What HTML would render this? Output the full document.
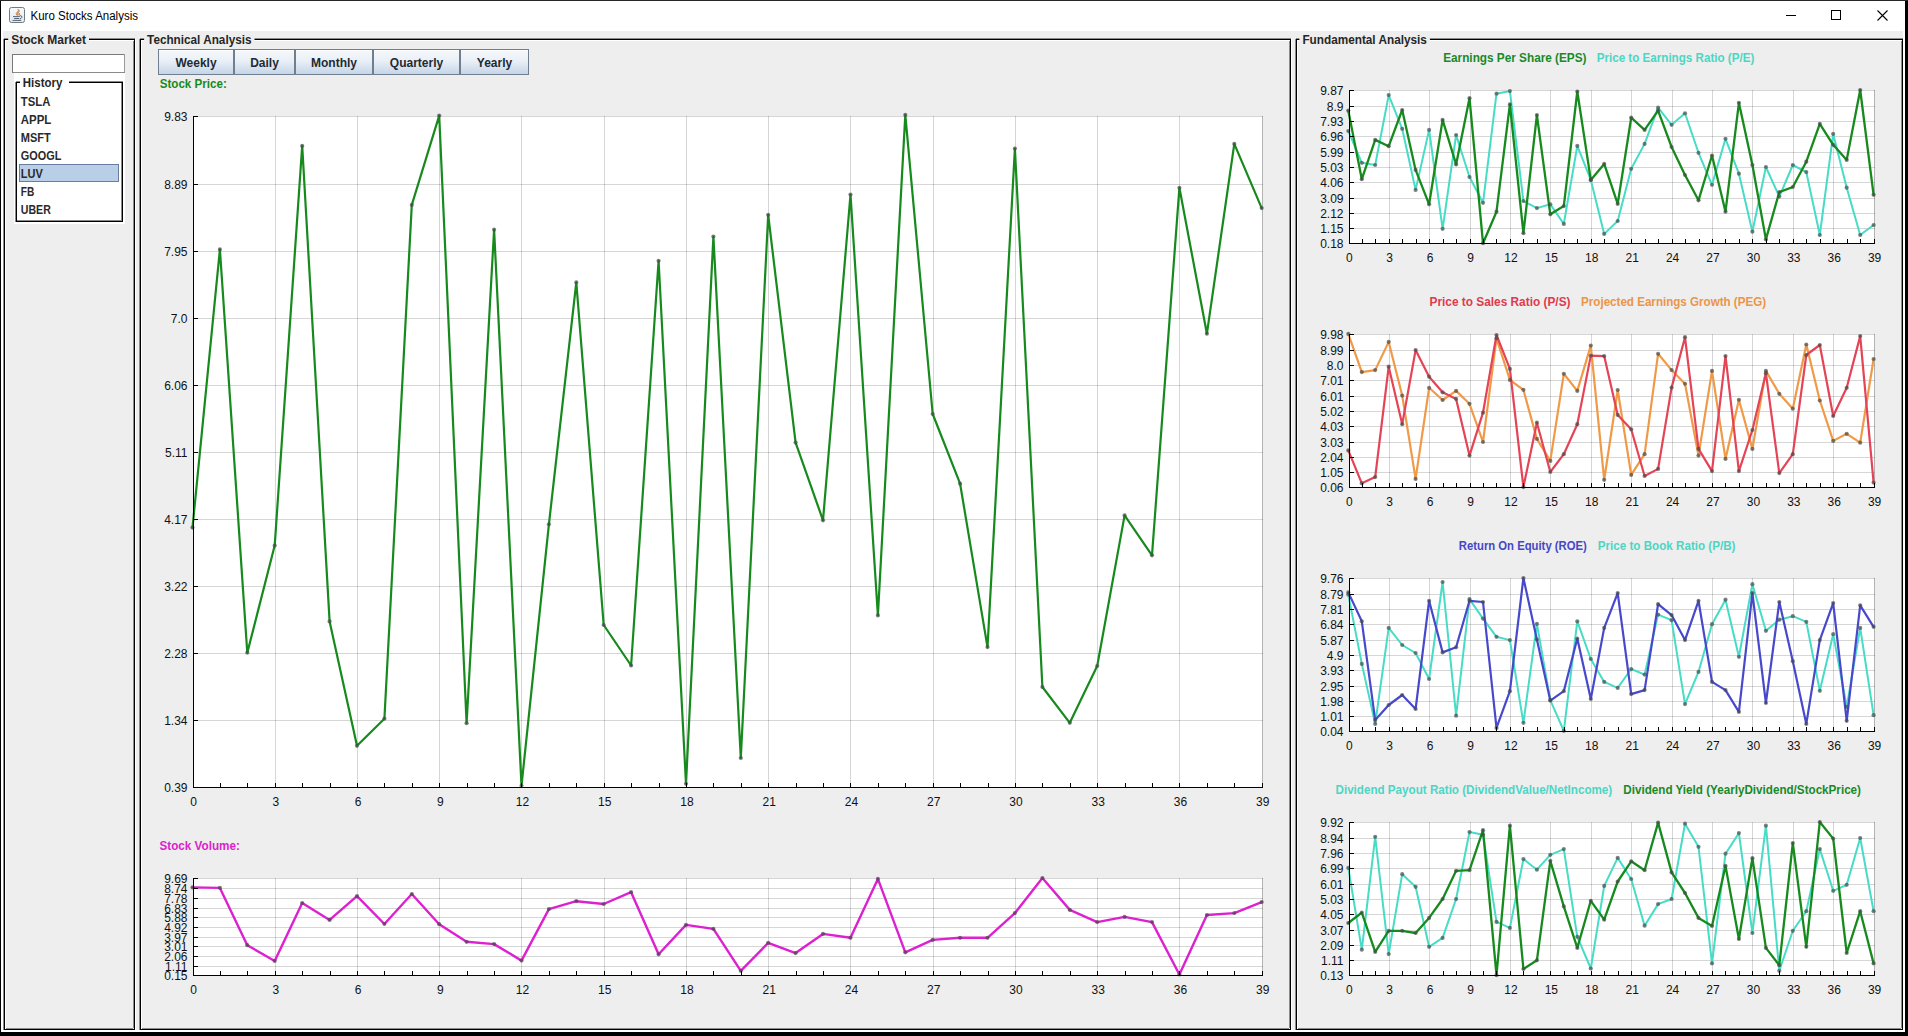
<!DOCTYPE html>
<html><head><meta charset="utf-8"><title>Kuro Stocks Analysis</title>
<style>html,body{margin:0;padding:0;overflow:hidden;background:#000;width:1908px;height:1036px}
svg{display:block;font-family:"Liberation Sans",sans-serif}</style></head>
<body><svg width="1908" height="1036" viewBox="0 0 1908 1036">
<rect x="0" y="0" width="1908" height="1036" fill="#000" />
<rect x="0" y="0" width="1908" height="1" fill="#262626" />
<rect x="1" y="1" width="1904" height="1031" fill="#ffffff" />
<rect x="3" y="31" width="1900" height="999" fill="#eeeeee" />
<g>
<defs><linearGradient id="ic" x1="0" y1="0" x2="0" y2="1"><stop offset="0" stop-color="#f8fafc"/><stop offset="1" stop-color="#dfe8f2"/></linearGradient></defs>
<rect x="9.5" y="7.5" width="15" height="15" fill="url(#ic)" rx="2" stroke="#727a82" stroke-width="1"/>
<path d="M17.2 15.6 q-2.2 -2 0.2 -3.8 q1.6 -1.2 0.6 -2.6 q2.4 1.4 0.6 3.2 q-1.2 1.2 -1.4 3.2 z M19 15.4 q-1 -1.2 0.4 -2.4 q0.8 1 -0.4 2.4 z" fill="#e8a870" stroke="#c07840" stroke-width="0.7"/>
<path d="M13 16.6 h6.8 M14.2 18.5 h4.8 M12.6 20.4 h8.6" stroke="#465262" stroke-width="0.9" fill="none"/>
<path d="M19.8 15.6 q2.6 0 2 2 q-0.4 1 -2.2 1.3" stroke="#4a5666" stroke-width="0.9" fill="none"/>
</g>
<text x="30.5" y="20" font-size="12.5" font-weight="normal" fill="#000" text-anchor="start" textLength="107.5" lengthAdjust="spacingAndGlyphs" >Kuro Stocks Analysis</text>
<rect x="1786" y="15" width="10" height="1" fill="#000" />
<rect x="1831.5" y="10.5" width="9" height="9" fill="none" stroke="#000" stroke-width="1"/>
<path d="M1877.5 10.5 L1887.5 20.5 M1887.5 10.5 L1877.5 20.5" stroke="#000" stroke-width="1.1"/>
<rect x="5" y="40" width="1" height="989" fill="#fff" />
<rect x="135" y="39" width="1" height="992" fill="#fff" />
<rect x="4" y="1030" width="132" height="1" fill="#fff" />
<rect x="5" y="40" width="3.1999999999999993" height="1" fill="#fff" />
<rect x="89.0" y="40" width="45.0" height="1" fill="#fff" />
<rect x="3" y="39" width="1" height="991" fill="#8c8c8c" />
<rect x="133" y="41" width="1" height="987" fill="#8c8c8c" />
<rect x="6" y="1028" width="127" height="1" fill="#8c8c8c" />
<rect x="4" y="38" width="4.199999999999999" height="1" fill="#8c8c8c" />
<rect x="89.0" y="38" width="46.0" height="1" fill="#8c8c8c" />
<rect x="4" y="39" width="1" height="991" fill="#000" />
<rect x="134" y="39" width="1" height="991" fill="#000" />
<rect x="4" y="1029" width="131" height="1" fill="#000" />
<rect x="4" y="39" width="4.199999999999999" height="1" fill="#000" />
<rect x="89.0" y="39" width="46.0" height="1" fill="#000" />
<text x="11.2" y="43.8" font-size="12" font-weight="bold" fill="#262626" text-anchor="start" textLength="74.8" lengthAdjust="spacingAndGlyphs" >Stock Market</text>
<rect x="141" y="40" width="1" height="989" fill="#fff" />
<rect x="1291" y="39" width="1" height="992" fill="#fff" />
<rect x="140" y="1030" width="1152" height="1" fill="#fff" />
<rect x="141" y="40" width="3.0999999999999943" height="1" fill="#fff" />
<rect x="254.5" y="40" width="1035.5" height="1" fill="#fff" />
<rect x="139" y="39" width="1" height="991" fill="#8c8c8c" />
<rect x="1289" y="41" width="1" height="987" fill="#8c8c8c" />
<rect x="142" y="1028" width="1147" height="1" fill="#8c8c8c" />
<rect x="140" y="38" width="4.099999999999994" height="1" fill="#8c8c8c" />
<rect x="254.5" y="38" width="1036.5" height="1" fill="#8c8c8c" />
<rect x="140" y="39" width="1" height="991" fill="#000" />
<rect x="1290" y="39" width="1" height="991" fill="#000" />
<rect x="140" y="1029" width="1151" height="1" fill="#000" />
<rect x="140" y="39" width="4.099999999999994" height="1" fill="#000" />
<rect x="254.5" y="39" width="1036.5" height="1" fill="#000" />
<text x="147.1" y="43.8" font-size="12" font-weight="bold" fill="#262626" text-anchor="start" textLength="104.4" lengthAdjust="spacingAndGlyphs" >Technical Analysis</text>
<rect x="1297" y="40" width="1" height="989" fill="#fff" />
<rect x="1903" y="39" width="1" height="992" fill="#fff" />
<rect x="1296" y="1030" width="608" height="1" fill="#fff" />
<rect x="1297" y="40" width="2.400000000000091" height="1" fill="#fff" />
<rect x="1429.9" y="40" width="472.0999999999999" height="1" fill="#fff" />
<rect x="1295" y="39" width="1" height="991" fill="#8c8c8c" />
<rect x="1901" y="41" width="1" height="987" fill="#8c8c8c" />
<rect x="1298" y="1028" width="603" height="1" fill="#8c8c8c" />
<rect x="1296" y="38" width="3.400000000000091" height="1" fill="#8c8c8c" />
<rect x="1429.9" y="38" width="473.0999999999999" height="1" fill="#8c8c8c" />
<rect x="1296" y="39" width="1" height="991" fill="#000" />
<rect x="1902" y="39" width="1" height="991" fill="#000" />
<rect x="1296" y="1029" width="607" height="1" fill="#000" />
<rect x="1296" y="39" width="3.400000000000091" height="1" fill="#000" />
<rect x="1429.9" y="39" width="473.0999999999999" height="1" fill="#000" />
<text x="1302.4" y="43.8" font-size="12" font-weight="bold" fill="#262626" text-anchor="start" textLength="124.5" lengthAdjust="spacingAndGlyphs" >Fundamental Analysis</text>
<rect x="14" y="73" width="111" height="151" fill="#fff" />
<rect x="12" y="54" width="113" height="19" fill="#fff" />
<rect x="12" y="54" width="113" height="1" fill="#7a7a7a" />
<rect x="12" y="54" width="1" height="19" fill="#7a7a7a" />
<rect x="124" y="54" width="1" height="19" fill="#9a9a9a" />
<rect x="13" y="72" width="112" height="1" fill="#8a8a8a" />
<rect x="15" y="82" width="1" height="140" fill="#888" />
<rect x="16" y="82" width="1" height="140" fill="#000" />
<rect x="122" y="82" width="1" height="140" fill="#000" />
<rect x="121" y="83" width="1" height="138" fill="#888" />
<rect x="16" y="221" width="107" height="1" fill="#000" />
<rect x="17" y="220" width="104" height="1" fill="#888" />
<rect x="16" y="81" width="4" height="1" fill="#888" />
<rect x="16" y="82" width="4" height="1" fill="#000" />
<rect x="69" y="81" width="54" height="1" fill="#888" />
<rect x="69" y="82" width="54" height="1" fill="#000" />
<text x="22.8" y="87" font-size="12" font-weight="bold" fill="#262626" text-anchor="start" textLength="39.5" lengthAdjust="spacingAndGlyphs" >History</text>
<rect x="19.5" y="164.5" width="99" height="17" fill="#b9cfe7" stroke="#6b7ca3" stroke-width="1"/>
<text x="20.8" y="105.8" font-size="12" font-weight="bold" fill="#2a2a2a" text-anchor="start" textLength="29.5" lengthAdjust="spacingAndGlyphs" >TSLA</text>
<text x="20.8" y="123.8" font-size="12" font-weight="bold" fill="#2a2a2a" text-anchor="start" textLength="30.5" lengthAdjust="spacingAndGlyphs" >APPL</text>
<text x="20.8" y="141.8" font-size="12" font-weight="bold" fill="#2a2a2a" text-anchor="start" textLength="30" lengthAdjust="spacingAndGlyphs" >MSFT</text>
<text x="20.8" y="159.8" font-size="12" font-weight="bold" fill="#2a2a2a" text-anchor="start" textLength="40.5" lengthAdjust="spacingAndGlyphs" >GOOGL</text>
<text x="20.8" y="177.8" font-size="12" font-weight="bold" fill="#2a2a2a" text-anchor="start" textLength="22" lengthAdjust="spacingAndGlyphs" >LUV</text>
<text x="20.8" y="195.8" font-size="12" font-weight="bold" fill="#2a2a2a" text-anchor="start" textLength="13.5" lengthAdjust="spacingAndGlyphs" >FB</text>
<text x="20.8" y="213.8" font-size="12" font-weight="bold" fill="#2a2a2a" text-anchor="start" textLength="30" lengthAdjust="spacingAndGlyphs" >UBER</text>
<defs><linearGradient id="bg" x1="0" y1="0" x2="0" y2="1"><stop offset="0" stop-color="#f6f9fc"/><stop offset="0.45" stop-color="#eaf0f7"/><stop offset="1" stop-color="#c3d3e6"/></linearGradient></defs>
<rect x="158" y="49" width="76" height="26" fill="url(#bg)" />
<rect x="159" y="50" width="74" height="1" fill="#fbfdff" />
<rect x="234" y="49" width="61" height="26" fill="url(#bg)" />
<rect x="235" y="50" width="59" height="1" fill="#fbfdff" />
<rect x="295" y="49" width="78" height="26" fill="url(#bg)" />
<rect x="296" y="50" width="76" height="1" fill="#fbfdff" />
<rect x="373" y="49" width="87" height="26" fill="url(#bg)" />
<rect x="374" y="50" width="85" height="1" fill="#fbfdff" />
<rect x="460" y="49" width="69" height="26" fill="url(#bg)" />
<rect x="461" y="50" width="67" height="1" fill="#fbfdff" />
<rect x="158" y="49" width="371" height="1" fill="#707f8f" />
<rect x="158" y="74" width="371" height="1" fill="#707f8f" />
<rect x="158" y="49" width="1" height="26" fill="#707f8f" />
<rect x="528" y="49" width="1" height="26" fill="#707f8f" />
<rect x="233" y="49" width="2" height="26" fill="#707f8f" />
<rect x="294" y="49" width="2" height="26" fill="#707f8f" />
<rect x="372" y="49" width="2" height="26" fill="#707f8f" />
<rect x="459" y="49" width="2" height="26" fill="#707f8f" />
<text x="196.0" y="66.7" font-size="12" font-weight="bold" fill="#222a33" text-anchor="middle" >Weekly</text>
<text x="264.5" y="66.7" font-size="12" font-weight="bold" fill="#222a33" text-anchor="middle" >Daily</text>
<text x="334.0" y="66.7" font-size="12" font-weight="bold" fill="#222a33" text-anchor="middle" >Monthly</text>
<text x="416.5" y="66.7" font-size="12" font-weight="bold" fill="#222a33" text-anchor="middle" >Quarterly</text>
<text x="494.5" y="66.7" font-size="12" font-weight="bold" fill="#222a33" text-anchor="middle" >Yearly</text>
<text x="159.7" y="87.8" font-size="12" font-weight="bold" fill="#168a24" text-anchor="start" textLength="67.1" lengthAdjust="spacingAndGlyphs" >Stock Price:</text>
<text x="159.5" y="850" font-size="12" font-weight="bold" fill="#dd22cc" text-anchor="start" textLength="80.4" lengthAdjust="spacingAndGlyphs" >Stock Volume:</text>
<rect x="194" y="116" width="1069" height="671" fill="#fff" />
<rect x="194" y="116" width="1069" height="1" fill="rgba(0,0,0,0.16)" />
<rect x="194" y="184" width="1069" height="1" fill="rgba(0,0,0,0.16)" />
<rect x="194" y="251" width="1069" height="1" fill="rgba(0,0,0,0.16)" />
<rect x="194" y="318" width="1069" height="1" fill="rgba(0,0,0,0.16)" />
<rect x="194" y="385" width="1069" height="1" fill="rgba(0,0,0,0.16)" />
<rect x="194" y="452" width="1069" height="1" fill="rgba(0,0,0,0.16)" />
<rect x="194" y="519" width="1069" height="1" fill="rgba(0,0,0,0.16)" />
<rect x="194" y="586" width="1069" height="1" fill="rgba(0,0,0,0.16)" />
<rect x="194" y="653" width="1069" height="1" fill="rgba(0,0,0,0.16)" />
<rect x="194" y="720" width="1069" height="1" fill="rgba(0,0,0,0.16)" />
<rect x="194" y="787" width="1069" height="1" fill="rgba(0,0,0,0.16)" />
<rect x="275" y="116" width="1" height="671" fill="rgba(0,0,0,0.16)" />
<rect x="357" y="116" width="1" height="671" fill="rgba(0,0,0,0.16)" />
<rect x="439" y="116" width="1" height="671" fill="rgba(0,0,0,0.16)" />
<rect x="521" y="116" width="1" height="671" fill="rgba(0,0,0,0.16)" />
<rect x="604" y="116" width="1" height="671" fill="rgba(0,0,0,0.16)" />
<rect x="686" y="116" width="1" height="671" fill="rgba(0,0,0,0.16)" />
<rect x="768" y="116" width="1" height="671" fill="rgba(0,0,0,0.16)" />
<rect x="850" y="116" width="1" height="671" fill="rgba(0,0,0,0.16)" />
<rect x="933" y="116" width="1" height="671" fill="rgba(0,0,0,0.16)" />
<rect x="1015" y="116" width="1" height="671" fill="rgba(0,0,0,0.16)" />
<rect x="1097" y="116" width="1" height="671" fill="rgba(0,0,0,0.16)" />
<rect x="1179" y="116" width="1" height="671" fill="rgba(0,0,0,0.16)" />
<rect x="1262" y="116" width="1" height="671" fill="rgba(0,0,0,0.16)" />
<rect x="1262" y="116" width="1" height="671" fill="rgba(0,0,0,0.16)" />
<polyline points="192.5,527.6 219.9,249.4 247.3,652.7 274.7,545.6 302.2,145.9 329.6,621.4 357.0,745.8 384.4,718.7 411.8,204.9 439.2,115.6 466.6,723.2 494.1,229.7 521.5,785.8 548.9,524.3 576.3,282.4 603.7,625.0 631.1,665.5 658.6,260.8 686.0,783.8 713.4,236.5 740.8,758.0 768.2,214.9 795.6,442.6 823.0,520.3 850.5,194.6 877.9,615.4 905.3,114.9 932.7,414.0 960.1,483.7 987.5,647.1 1014.9,148.6 1042.4,687.0 1069.8,722.8 1097.2,666.0 1124.6,515.4 1152.0,555.3 1179.4,187.8 1206.9,333.7 1234.3,143.9 1261.7,208.1" fill="none" stroke="#178a1e" stroke-width="2.2" stroke-linejoin="round" stroke-linecap="round"/>
<circle cx="192.5" cy="527.6" r="2.1" fill="#454a48" fill-opacity="0.68"/>
<circle cx="219.9" cy="249.4" r="2.1" fill="#454a48" fill-opacity="0.68"/>
<circle cx="247.3" cy="652.7" r="2.1" fill="#454a48" fill-opacity="0.68"/>
<circle cx="274.7" cy="545.6" r="2.1" fill="#454a48" fill-opacity="0.68"/>
<circle cx="302.2" cy="145.9" r="2.1" fill="#454a48" fill-opacity="0.68"/>
<circle cx="329.6" cy="621.4" r="2.1" fill="#454a48" fill-opacity="0.68"/>
<circle cx="357.0" cy="745.8" r="2.1" fill="#454a48" fill-opacity="0.68"/>
<circle cx="384.4" cy="718.7" r="2.1" fill="#454a48" fill-opacity="0.68"/>
<circle cx="411.8" cy="204.9" r="2.1" fill="#454a48" fill-opacity="0.68"/>
<circle cx="439.2" cy="115.6" r="2.1" fill="#454a48" fill-opacity="0.68"/>
<circle cx="466.6" cy="723.2" r="2.1" fill="#454a48" fill-opacity="0.68"/>
<circle cx="494.1" cy="229.7" r="2.1" fill="#454a48" fill-opacity="0.68"/>
<circle cx="521.5" cy="785.8" r="2.1" fill="#454a48" fill-opacity="0.68"/>
<circle cx="548.9" cy="524.3" r="2.1" fill="#454a48" fill-opacity="0.68"/>
<circle cx="576.3" cy="282.4" r="2.1" fill="#454a48" fill-opacity="0.68"/>
<circle cx="603.7" cy="625.0" r="2.1" fill="#454a48" fill-opacity="0.68"/>
<circle cx="631.1" cy="665.5" r="2.1" fill="#454a48" fill-opacity="0.68"/>
<circle cx="658.6" cy="260.8" r="2.1" fill="#454a48" fill-opacity="0.68"/>
<circle cx="686.0" cy="783.8" r="2.1" fill="#454a48" fill-opacity="0.68"/>
<circle cx="713.4" cy="236.5" r="2.1" fill="#454a48" fill-opacity="0.68"/>
<circle cx="740.8" cy="758.0" r="2.1" fill="#454a48" fill-opacity="0.68"/>
<circle cx="768.2" cy="214.9" r="2.1" fill="#454a48" fill-opacity="0.68"/>
<circle cx="795.6" cy="442.6" r="2.1" fill="#454a48" fill-opacity="0.68"/>
<circle cx="823.0" cy="520.3" r="2.1" fill="#454a48" fill-opacity="0.68"/>
<circle cx="850.5" cy="194.6" r="2.1" fill="#454a48" fill-opacity="0.68"/>
<circle cx="877.9" cy="615.4" r="2.1" fill="#454a48" fill-opacity="0.68"/>
<circle cx="905.3" cy="114.9" r="2.1" fill="#454a48" fill-opacity="0.68"/>
<circle cx="932.7" cy="414.0" r="2.1" fill="#454a48" fill-opacity="0.68"/>
<circle cx="960.1" cy="483.7" r="2.1" fill="#454a48" fill-opacity="0.68"/>
<circle cx="987.5" cy="647.1" r="2.1" fill="#454a48" fill-opacity="0.68"/>
<circle cx="1014.9" cy="148.6" r="2.1" fill="#454a48" fill-opacity="0.68"/>
<circle cx="1042.4" cy="687.0" r="2.1" fill="#454a48" fill-opacity="0.68"/>
<circle cx="1069.8" cy="722.8" r="2.1" fill="#454a48" fill-opacity="0.68"/>
<circle cx="1097.2" cy="666.0" r="2.1" fill="#454a48" fill-opacity="0.68"/>
<circle cx="1124.6" cy="515.4" r="2.1" fill="#454a48" fill-opacity="0.68"/>
<circle cx="1152.0" cy="555.3" r="2.1" fill="#454a48" fill-opacity="0.68"/>
<circle cx="1179.4" cy="187.8" r="2.1" fill="#454a48" fill-opacity="0.68"/>
<circle cx="1206.9" cy="333.7" r="2.1" fill="#454a48" fill-opacity="0.68"/>
<circle cx="1234.3" cy="143.9" r="2.1" fill="#454a48" fill-opacity="0.68"/>
<circle cx="1261.7" cy="208.1" r="2.1" fill="#454a48" fill-opacity="0.68"/>
<rect x="193" y="116" width="1" height="672" fill="#000" />
<rect x="193" y="787" width="1070" height="1" fill="#000" />
<rect x="194" y="116" width="4" height="1" fill="#000" />
<text x="187.5" y="121.2" font-size="12" font-weight="normal" fill="#111" text-anchor="end" >9.83</text>
<rect x="194" y="184" width="4" height="1" fill="#000" />
<text x="187.5" y="189.2" font-size="12" font-weight="normal" fill="#111" text-anchor="end" >8.89</text>
<rect x="194" y="251" width="4" height="1" fill="#000" />
<text x="187.5" y="256.2" font-size="12" font-weight="normal" fill="#111" text-anchor="end" >7.95</text>
<rect x="194" y="318" width="4" height="1" fill="#000" />
<text x="187.5" y="323.2" font-size="12" font-weight="normal" fill="#111" text-anchor="end" >7.0</text>
<rect x="194" y="385" width="4" height="1" fill="#000" />
<text x="187.5" y="390.2" font-size="12" font-weight="normal" fill="#111" text-anchor="end" >6.06</text>
<rect x="194" y="452" width="4" height="1" fill="#000" />
<text x="187.5" y="457.2" font-size="12" font-weight="normal" fill="#111" text-anchor="end" >5.11</text>
<rect x="194" y="519" width="4" height="1" fill="#000" />
<text x="187.5" y="524.2" font-size="12" font-weight="normal" fill="#111" text-anchor="end" >4.17</text>
<rect x="194" y="586" width="4" height="1" fill="#000" />
<text x="187.5" y="591.2" font-size="12" font-weight="normal" fill="#111" text-anchor="end" >3.22</text>
<rect x="194" y="653" width="4" height="1" fill="#000" />
<text x="187.5" y="658.2" font-size="12" font-weight="normal" fill="#111" text-anchor="end" >2.28</text>
<rect x="194" y="720" width="4" height="1" fill="#000" />
<text x="187.5" y="725.2" font-size="12" font-weight="normal" fill="#111" text-anchor="end" >1.34</text>
<rect x="194" y="787" width="4" height="1" fill="#000" />
<text x="187.5" y="792.2" font-size="12" font-weight="normal" fill="#111" text-anchor="end" >0.39</text>
<rect x="220" y="783" width="1" height="4" fill="#000" />
<rect x="247" y="783" width="1" height="4" fill="#000" />
<rect x="275" y="783" width="1" height="4" fill="#000" />
<rect x="302" y="783" width="1" height="4" fill="#000" />
<rect x="330" y="783" width="1" height="4" fill="#000" />
<rect x="357" y="783" width="1" height="4" fill="#000" />
<rect x="384" y="783" width="1" height="4" fill="#000" />
<rect x="412" y="783" width="1" height="4" fill="#000" />
<rect x="439" y="783" width="1" height="4" fill="#000" />
<rect x="467" y="783" width="1" height="4" fill="#000" />
<rect x="494" y="783" width="1" height="4" fill="#000" />
<rect x="521" y="783" width="1" height="4" fill="#000" />
<rect x="549" y="783" width="1" height="4" fill="#000" />
<rect x="576" y="783" width="1" height="4" fill="#000" />
<rect x="604" y="783" width="1" height="4" fill="#000" />
<rect x="631" y="783" width="1" height="4" fill="#000" />
<rect x="659" y="783" width="1" height="4" fill="#000" />
<rect x="686" y="783" width="1" height="4" fill="#000" />
<rect x="713" y="783" width="1" height="4" fill="#000" />
<rect x="741" y="783" width="1" height="4" fill="#000" />
<rect x="768" y="783" width="1" height="4" fill="#000" />
<rect x="796" y="783" width="1" height="4" fill="#000" />
<rect x="823" y="783" width="1" height="4" fill="#000" />
<rect x="850" y="783" width="1" height="4" fill="#000" />
<rect x="878" y="783" width="1" height="4" fill="#000" />
<rect x="905" y="783" width="1" height="4" fill="#000" />
<rect x="933" y="783" width="1" height="4" fill="#000" />
<rect x="960" y="783" width="1" height="4" fill="#000" />
<rect x="988" y="783" width="1" height="4" fill="#000" />
<rect x="1015" y="783" width="1" height="4" fill="#000" />
<rect x="1042" y="783" width="1" height="4" fill="#000" />
<rect x="1070" y="783" width="1" height="4" fill="#000" />
<rect x="1097" y="783" width="1" height="4" fill="#000" />
<rect x="1125" y="783" width="1" height="4" fill="#000" />
<rect x="1152" y="783" width="1" height="4" fill="#000" />
<rect x="1179" y="783" width="1" height="4" fill="#000" />
<rect x="1207" y="783" width="1" height="4" fill="#000" />
<rect x="1234" y="783" width="1" height="4" fill="#000" />
<rect x="1262" y="783" width="1" height="4" fill="#000" />
<text x="193.5" y="806" font-size="12" font-weight="normal" fill="#111" text-anchor="middle" >0</text>
<text x="275.745" y="806" font-size="12" font-weight="normal" fill="#111" text-anchor="middle" >3</text>
<text x="357.99" y="806" font-size="12" font-weight="normal" fill="#111" text-anchor="middle" >6</text>
<text x="440.235" y="806" font-size="12" font-weight="normal" fill="#111" text-anchor="middle" >9</text>
<text x="522.48" y="806" font-size="12" font-weight="normal" fill="#111" text-anchor="middle" >12</text>
<text x="604.7249999999999" y="806" font-size="12" font-weight="normal" fill="#111" text-anchor="middle" >15</text>
<text x="686.97" y="806" font-size="12" font-weight="normal" fill="#111" text-anchor="middle" >18</text>
<text x="769.215" y="806" font-size="12" font-weight="normal" fill="#111" text-anchor="middle" >21</text>
<text x="851.46" y="806" font-size="12" font-weight="normal" fill="#111" text-anchor="middle" >24</text>
<text x="933.7049999999999" y="806" font-size="12" font-weight="normal" fill="#111" text-anchor="middle" >27</text>
<text x="1015.9499999999999" y="806" font-size="12" font-weight="normal" fill="#111" text-anchor="middle" >30</text>
<text x="1098.195" y="806" font-size="12" font-weight="normal" fill="#111" text-anchor="middle" >33</text>
<text x="1180.44" y="806" font-size="12" font-weight="normal" fill="#111" text-anchor="middle" >36</text>
<text x="1262.685" y="806" font-size="12" font-weight="normal" fill="#111" text-anchor="middle" >39</text>
<rect x="194" y="878" width="1069" height="97" fill="#fff" />
<rect x="194" y="878" width="1069" height="1" fill="rgba(0,0,0,0.16)" />
<rect x="194" y="888" width="1069" height="1" fill="rgba(0,0,0,0.16)" />
<rect x="194" y="898" width="1069" height="1" fill="rgba(0,0,0,0.16)" />
<rect x="194" y="908" width="1069" height="1" fill="rgba(0,0,0,0.16)" />
<rect x="194" y="917" width="1069" height="1" fill="rgba(0,0,0,0.16)" />
<rect x="194" y="927" width="1069" height="1" fill="rgba(0,0,0,0.16)" />
<rect x="194" y="937" width="1069" height="1" fill="rgba(0,0,0,0.16)" />
<rect x="194" y="946" width="1069" height="1" fill="rgba(0,0,0,0.16)" />
<rect x="194" y="956" width="1069" height="1" fill="rgba(0,0,0,0.16)" />
<rect x="194" y="966" width="1069" height="1" fill="rgba(0,0,0,0.16)" />
<rect x="194" y="975" width="1069" height="1" fill="rgba(0,0,0,0.16)" />
<rect x="275" y="878" width="1" height="97" fill="rgba(0,0,0,0.16)" />
<rect x="357" y="878" width="1" height="97" fill="rgba(0,0,0,0.16)" />
<rect x="439" y="878" width="1" height="97" fill="rgba(0,0,0,0.16)" />
<rect x="521" y="878" width="1" height="97" fill="rgba(0,0,0,0.16)" />
<rect x="604" y="878" width="1" height="97" fill="rgba(0,0,0,0.16)" />
<rect x="686" y="878" width="1" height="97" fill="rgba(0,0,0,0.16)" />
<rect x="768" y="878" width="1" height="97" fill="rgba(0,0,0,0.16)" />
<rect x="850" y="878" width="1" height="97" fill="rgba(0,0,0,0.16)" />
<rect x="933" y="878" width="1" height="97" fill="rgba(0,0,0,0.16)" />
<rect x="1015" y="878" width="1" height="97" fill="rgba(0,0,0,0.16)" />
<rect x="1097" y="878" width="1" height="97" fill="rgba(0,0,0,0.16)" />
<rect x="1179" y="878" width="1" height="97" fill="rgba(0,0,0,0.16)" />
<rect x="1262" y="878" width="1" height="97" fill="rgba(0,0,0,0.16)" />
<rect x="1262" y="878" width="1" height="97" fill="rgba(0,0,0,0.16)" />
<polyline points="192.5,887.4 219.9,887.9 247.3,945.2 274.7,961.0 302.2,903.0 329.6,919.9 357.0,896.1 384.4,924.0 411.8,894.0 439.2,924.2 466.6,941.8 494.1,944.1 521.5,960.6 548.9,909.1 576.3,901.2 603.7,904.0 631.1,892.2 658.6,954.3 686.0,924.9 713.4,928.9 740.8,970.8 768.2,942.9 795.6,953.1 823.0,933.9 850.5,937.8 877.9,878.9 905.3,952.3 932.7,939.9 960.1,937.8 987.5,937.8 1014.9,913.1 1042.4,878.0 1069.8,909.9 1097.2,922.1 1124.6,916.9 1152.0,922.1 1179.4,974.5 1206.9,915.0 1234.3,913.1 1261.7,902.1" fill="none" stroke="#dd20d0" stroke-width="2.4" stroke-linejoin="round" stroke-linecap="round"/>
<circle cx="192.5" cy="887.4" r="2.1" fill="#454a48" fill-opacity="0.68"/>
<circle cx="219.9" cy="887.9" r="2.1" fill="#454a48" fill-opacity="0.68"/>
<circle cx="247.3" cy="945.2" r="2.1" fill="#454a48" fill-opacity="0.68"/>
<circle cx="274.7" cy="961.0" r="2.1" fill="#454a48" fill-opacity="0.68"/>
<circle cx="302.2" cy="903.0" r="2.1" fill="#454a48" fill-opacity="0.68"/>
<circle cx="329.6" cy="919.9" r="2.1" fill="#454a48" fill-opacity="0.68"/>
<circle cx="357.0" cy="896.1" r="2.1" fill="#454a48" fill-opacity="0.68"/>
<circle cx="384.4" cy="924.0" r="2.1" fill="#454a48" fill-opacity="0.68"/>
<circle cx="411.8" cy="894.0" r="2.1" fill="#454a48" fill-opacity="0.68"/>
<circle cx="439.2" cy="924.2" r="2.1" fill="#454a48" fill-opacity="0.68"/>
<circle cx="466.6" cy="941.8" r="2.1" fill="#454a48" fill-opacity="0.68"/>
<circle cx="494.1" cy="944.1" r="2.1" fill="#454a48" fill-opacity="0.68"/>
<circle cx="521.5" cy="960.6" r="2.1" fill="#454a48" fill-opacity="0.68"/>
<circle cx="548.9" cy="909.1" r="2.1" fill="#454a48" fill-opacity="0.68"/>
<circle cx="576.3" cy="901.2" r="2.1" fill="#454a48" fill-opacity="0.68"/>
<circle cx="603.7" cy="904.0" r="2.1" fill="#454a48" fill-opacity="0.68"/>
<circle cx="631.1" cy="892.2" r="2.1" fill="#454a48" fill-opacity="0.68"/>
<circle cx="658.6" cy="954.3" r="2.1" fill="#454a48" fill-opacity="0.68"/>
<circle cx="686.0" cy="924.9" r="2.1" fill="#454a48" fill-opacity="0.68"/>
<circle cx="713.4" cy="928.9" r="2.1" fill="#454a48" fill-opacity="0.68"/>
<circle cx="740.8" cy="970.8" r="2.1" fill="#454a48" fill-opacity="0.68"/>
<circle cx="768.2" cy="942.9" r="2.1" fill="#454a48" fill-opacity="0.68"/>
<circle cx="795.6" cy="953.1" r="2.1" fill="#454a48" fill-opacity="0.68"/>
<circle cx="823.0" cy="933.9" r="2.1" fill="#454a48" fill-opacity="0.68"/>
<circle cx="850.5" cy="937.8" r="2.1" fill="#454a48" fill-opacity="0.68"/>
<circle cx="877.9" cy="878.9" r="2.1" fill="#454a48" fill-opacity="0.68"/>
<circle cx="905.3" cy="952.3" r="2.1" fill="#454a48" fill-opacity="0.68"/>
<circle cx="932.7" cy="939.9" r="2.1" fill="#454a48" fill-opacity="0.68"/>
<circle cx="960.1" cy="937.8" r="2.1" fill="#454a48" fill-opacity="0.68"/>
<circle cx="987.5" cy="937.8" r="2.1" fill="#454a48" fill-opacity="0.68"/>
<circle cx="1014.9" cy="913.1" r="2.1" fill="#454a48" fill-opacity="0.68"/>
<circle cx="1042.4" cy="878.0" r="2.1" fill="#454a48" fill-opacity="0.68"/>
<circle cx="1069.8" cy="909.9" r="2.1" fill="#454a48" fill-opacity="0.68"/>
<circle cx="1097.2" cy="922.1" r="2.1" fill="#454a48" fill-opacity="0.68"/>
<circle cx="1124.6" cy="916.9" r="2.1" fill="#454a48" fill-opacity="0.68"/>
<circle cx="1152.0" cy="922.1" r="2.1" fill="#454a48" fill-opacity="0.68"/>
<circle cx="1179.4" cy="974.5" r="2.1" fill="#454a48" fill-opacity="0.68"/>
<circle cx="1206.9" cy="915.0" r="2.1" fill="#454a48" fill-opacity="0.68"/>
<circle cx="1234.3" cy="913.1" r="2.1" fill="#454a48" fill-opacity="0.68"/>
<circle cx="1261.7" cy="902.1" r="2.1" fill="#454a48" fill-opacity="0.68"/>
<rect x="193" y="878" width="1" height="98" fill="#000" />
<rect x="193" y="975" width="1070" height="1" fill="#000" />
<rect x="194" y="878" width="4" height="1" fill="#000" />
<text x="187.5" y="883.2" font-size="12" font-weight="normal" fill="#111" text-anchor="end" >9.69</text>
<rect x="194" y="888" width="4" height="1" fill="#000" />
<text x="187.5" y="893.2" font-size="12" font-weight="normal" fill="#111" text-anchor="end" >8.74</text>
<rect x="194" y="898" width="4" height="1" fill="#000" />
<text x="187.5" y="903.2" font-size="12" font-weight="normal" fill="#111" text-anchor="end" >7.78</text>
<rect x="194" y="908" width="4" height="1" fill="#000" />
<text x="187.5" y="913.2" font-size="12" font-weight="normal" fill="#111" text-anchor="end" >6.83</text>
<rect x="194" y="917" width="4" height="1" fill="#000" />
<text x="187.5" y="922.2" font-size="12" font-weight="normal" fill="#111" text-anchor="end" >5.88</text>
<rect x="194" y="927" width="4" height="1" fill="#000" />
<text x="187.5" y="932.2" font-size="12" font-weight="normal" fill="#111" text-anchor="end" >4.92</text>
<rect x="194" y="937" width="4" height="1" fill="#000" />
<text x="187.5" y="942.2" font-size="12" font-weight="normal" fill="#111" text-anchor="end" >3.97</text>
<rect x="194" y="946" width="4" height="1" fill="#000" />
<text x="187.5" y="951.2" font-size="12" font-weight="normal" fill="#111" text-anchor="end" >3.01</text>
<rect x="194" y="956" width="4" height="1" fill="#000" />
<text x="187.5" y="961.2" font-size="12" font-weight="normal" fill="#111" text-anchor="end" >2.06</text>
<rect x="194" y="966" width="4" height="1" fill="#000" />
<text x="187.5" y="971.2" font-size="12" font-weight="normal" fill="#111" text-anchor="end" >1.11</text>
<rect x="194" y="975" width="4" height="1" fill="#000" />
<text x="187.5" y="980.2" font-size="12" font-weight="normal" fill="#111" text-anchor="end" >0.15</text>
<rect x="220" y="971" width="1" height="4" fill="#000" />
<rect x="247" y="971" width="1" height="4" fill="#000" />
<rect x="275" y="971" width="1" height="4" fill="#000" />
<rect x="302" y="971" width="1" height="4" fill="#000" />
<rect x="330" y="971" width="1" height="4" fill="#000" />
<rect x="357" y="971" width="1" height="4" fill="#000" />
<rect x="384" y="971" width="1" height="4" fill="#000" />
<rect x="412" y="971" width="1" height="4" fill="#000" />
<rect x="439" y="971" width="1" height="4" fill="#000" />
<rect x="467" y="971" width="1" height="4" fill="#000" />
<rect x="494" y="971" width="1" height="4" fill="#000" />
<rect x="521" y="971" width="1" height="4" fill="#000" />
<rect x="549" y="971" width="1" height="4" fill="#000" />
<rect x="576" y="971" width="1" height="4" fill="#000" />
<rect x="604" y="971" width="1" height="4" fill="#000" />
<rect x="631" y="971" width="1" height="4" fill="#000" />
<rect x="659" y="971" width="1" height="4" fill="#000" />
<rect x="686" y="971" width="1" height="4" fill="#000" />
<rect x="713" y="971" width="1" height="4" fill="#000" />
<rect x="741" y="971" width="1" height="4" fill="#000" />
<rect x="768" y="971" width="1" height="4" fill="#000" />
<rect x="796" y="971" width="1" height="4" fill="#000" />
<rect x="823" y="971" width="1" height="4" fill="#000" />
<rect x="850" y="971" width="1" height="4" fill="#000" />
<rect x="878" y="971" width="1" height="4" fill="#000" />
<rect x="905" y="971" width="1" height="4" fill="#000" />
<rect x="933" y="971" width="1" height="4" fill="#000" />
<rect x="960" y="971" width="1" height="4" fill="#000" />
<rect x="988" y="971" width="1" height="4" fill="#000" />
<rect x="1015" y="971" width="1" height="4" fill="#000" />
<rect x="1042" y="971" width="1" height="4" fill="#000" />
<rect x="1070" y="971" width="1" height="4" fill="#000" />
<rect x="1097" y="971" width="1" height="4" fill="#000" />
<rect x="1125" y="971" width="1" height="4" fill="#000" />
<rect x="1152" y="971" width="1" height="4" fill="#000" />
<rect x="1179" y="971" width="1" height="4" fill="#000" />
<rect x="1207" y="971" width="1" height="4" fill="#000" />
<rect x="1234" y="971" width="1" height="4" fill="#000" />
<rect x="1262" y="971" width="1" height="4" fill="#000" />
<text x="193.5" y="993.5" font-size="12" font-weight="normal" fill="#111" text-anchor="middle" >0</text>
<text x="275.745" y="993.5" font-size="12" font-weight="normal" fill="#111" text-anchor="middle" >3</text>
<text x="357.99" y="993.5" font-size="12" font-weight="normal" fill="#111" text-anchor="middle" >6</text>
<text x="440.235" y="993.5" font-size="12" font-weight="normal" fill="#111" text-anchor="middle" >9</text>
<text x="522.48" y="993.5" font-size="12" font-weight="normal" fill="#111" text-anchor="middle" >12</text>
<text x="604.7249999999999" y="993.5" font-size="12" font-weight="normal" fill="#111" text-anchor="middle" >15</text>
<text x="686.97" y="993.5" font-size="12" font-weight="normal" fill="#111" text-anchor="middle" >18</text>
<text x="769.215" y="993.5" font-size="12" font-weight="normal" fill="#111" text-anchor="middle" >21</text>
<text x="851.46" y="993.5" font-size="12" font-weight="normal" fill="#111" text-anchor="middle" >24</text>
<text x="933.7049999999999" y="993.5" font-size="12" font-weight="normal" fill="#111" text-anchor="middle" >27</text>
<text x="1015.9499999999999" y="993.5" font-size="12" font-weight="normal" fill="#111" text-anchor="middle" >30</text>
<text x="1098.195" y="993.5" font-size="12" font-weight="normal" fill="#111" text-anchor="middle" >33</text>
<text x="1180.44" y="993.5" font-size="12" font-weight="normal" fill="#111" text-anchor="middle" >36</text>
<text x="1262.685" y="993.5" font-size="12" font-weight="normal" fill="#111" text-anchor="middle" >39</text>
<rect x="1350" y="90" width="525" height="153" fill="#fff" />
<rect x="1350" y="90" width="525" height="1" fill="rgba(0,0,0,0.16)" />
<rect x="1350" y="106" width="525" height="1" fill="rgba(0,0,0,0.16)" />
<rect x="1350" y="121" width="525" height="1" fill="rgba(0,0,0,0.16)" />
<rect x="1350" y="136" width="525" height="1" fill="rgba(0,0,0,0.16)" />
<rect x="1350" y="152" width="525" height="1" fill="rgba(0,0,0,0.16)" />
<rect x="1350" y="167" width="525" height="1" fill="rgba(0,0,0,0.16)" />
<rect x="1350" y="182" width="525" height="1" fill="rgba(0,0,0,0.16)" />
<rect x="1350" y="198" width="525" height="1" fill="rgba(0,0,0,0.16)" />
<rect x="1350" y="213" width="525" height="1" fill="rgba(0,0,0,0.16)" />
<rect x="1350" y="228" width="525" height="1" fill="rgba(0,0,0,0.16)" />
<rect x="1350" y="243" width="525" height="1" fill="rgba(0,0,0,0.16)" />
<rect x="1389" y="90" width="1" height="153" fill="rgba(0,0,0,0.16)" />
<rect x="1429" y="90" width="1" height="153" fill="rgba(0,0,0,0.16)" />
<rect x="1470" y="90" width="1" height="153" fill="rgba(0,0,0,0.16)" />
<rect x="1510" y="90" width="1" height="153" fill="rgba(0,0,0,0.16)" />
<rect x="1550" y="90" width="1" height="153" fill="rgba(0,0,0,0.16)" />
<rect x="1591" y="90" width="1" height="153" fill="rgba(0,0,0,0.16)" />
<rect x="1631" y="90" width="1" height="153" fill="rgba(0,0,0,0.16)" />
<rect x="1672" y="90" width="1" height="153" fill="rgba(0,0,0,0.16)" />
<rect x="1712" y="90" width="1" height="153" fill="rgba(0,0,0,0.16)" />
<rect x="1752" y="90" width="1" height="153" fill="rgba(0,0,0,0.16)" />
<rect x="1793" y="90" width="1" height="153" fill="rgba(0,0,0,0.16)" />
<rect x="1833" y="90" width="1" height="153" fill="rgba(0,0,0,0.16)" />
<rect x="1874" y="90" width="1" height="153" fill="rgba(0,0,0,0.16)" />
<rect x="1874" y="90" width="1" height="153" fill="rgba(0,0,0,0.16)" />
<polyline points="1348.3,131.0 1361.8,162.8 1375.2,165.0 1388.7,95.1 1402.2,128.8 1415.6,189.9 1429.1,129.9 1442.6,228.8 1456.1,135.0 1469.5,177.0 1483.0,202.8 1496.5,93.7 1509.9,91.1 1523.4,201.0 1536.9,208.1 1550.3,204.3 1563.8,223.9 1577.3,145.9 1590.8,179.9 1604.2,233.9 1617.7,221.0 1631.2,168.8 1644.6,143.9 1658.1,107.7 1671.6,124.8 1685.0,113.3 1698.5,152.8 1712.0,184.8 1725.5,138.8 1738.9,173.7 1752.4,231.7 1765.9,167.0 1779.3,196.6 1792.8,165.0 1806.3,172.1 1819.8,235.0 1833.2,133.9 1846.7,187.7 1860.2,235.0 1873.6,225.0" fill="none" stroke="#46dcc6" stroke-width="2.0" stroke-linejoin="round" stroke-linecap="round"/>
<polyline points="1348.3,110.6 1361.8,179.2 1375.2,139.9 1388.7,146.2 1402.2,110.0 1415.6,169.9 1429.1,204.3 1442.6,119.9 1456.1,164.4 1469.5,98.2 1483.0,243.2 1496.5,211.7 1509.9,104.4 1523.4,233.2 1536.9,115.1 1550.3,214.3 1563.8,206.1 1577.3,91.5 1590.8,179.9 1604.2,163.9 1617.7,203.9 1631.2,117.7 1644.6,129.9 1658.1,110.6 1671.6,147.0 1685.0,175.0 1698.5,200.3 1712.0,155.5 1725.5,211.7 1738.9,102.8 1752.4,165.0 1765.9,239.4 1779.3,192.1 1792.8,187.0 1806.3,161.7 1819.8,123.9 1833.2,144.8 1846.7,159.9 1860.2,90.0 1873.6,194.8" fill="none" stroke="#178a1e" stroke-width="2.3" stroke-linejoin="round" stroke-linecap="round"/>
<circle cx="1348.3" cy="131.0" r="2.1" fill="#454a48" fill-opacity="0.68"/>
<circle cx="1361.8" cy="162.8" r="2.1" fill="#454a48" fill-opacity="0.68"/>
<circle cx="1375.2" cy="165.0" r="2.1" fill="#454a48" fill-opacity="0.68"/>
<circle cx="1388.7" cy="95.1" r="2.1" fill="#454a48" fill-opacity="0.68"/>
<circle cx="1402.2" cy="128.8" r="2.1" fill="#454a48" fill-opacity="0.68"/>
<circle cx="1415.6" cy="189.9" r="2.1" fill="#454a48" fill-opacity="0.68"/>
<circle cx="1429.1" cy="129.9" r="2.1" fill="#454a48" fill-opacity="0.68"/>
<circle cx="1442.6" cy="228.8" r="2.1" fill="#454a48" fill-opacity="0.68"/>
<circle cx="1456.1" cy="135.0" r="2.1" fill="#454a48" fill-opacity="0.68"/>
<circle cx="1469.5" cy="177.0" r="2.1" fill="#454a48" fill-opacity="0.68"/>
<circle cx="1483.0" cy="202.8" r="2.1" fill="#454a48" fill-opacity="0.68"/>
<circle cx="1496.5" cy="93.7" r="2.1" fill="#454a48" fill-opacity="0.68"/>
<circle cx="1509.9" cy="91.1" r="2.1" fill="#454a48" fill-opacity="0.68"/>
<circle cx="1523.4" cy="201.0" r="2.1" fill="#454a48" fill-opacity="0.68"/>
<circle cx="1536.9" cy="208.1" r="2.1" fill="#454a48" fill-opacity="0.68"/>
<circle cx="1550.3" cy="204.3" r="2.1" fill="#454a48" fill-opacity="0.68"/>
<circle cx="1563.8" cy="223.9" r="2.1" fill="#454a48" fill-opacity="0.68"/>
<circle cx="1577.3" cy="145.9" r="2.1" fill="#454a48" fill-opacity="0.68"/>
<circle cx="1590.8" cy="179.9" r="2.1" fill="#454a48" fill-opacity="0.68"/>
<circle cx="1604.2" cy="233.9" r="2.1" fill="#454a48" fill-opacity="0.68"/>
<circle cx="1617.7" cy="221.0" r="2.1" fill="#454a48" fill-opacity="0.68"/>
<circle cx="1631.2" cy="168.8" r="2.1" fill="#454a48" fill-opacity="0.68"/>
<circle cx="1644.6" cy="143.9" r="2.1" fill="#454a48" fill-opacity="0.68"/>
<circle cx="1658.1" cy="107.7" r="2.1" fill="#454a48" fill-opacity="0.68"/>
<circle cx="1671.6" cy="124.8" r="2.1" fill="#454a48" fill-opacity="0.68"/>
<circle cx="1685.0" cy="113.3" r="2.1" fill="#454a48" fill-opacity="0.68"/>
<circle cx="1698.5" cy="152.8" r="2.1" fill="#454a48" fill-opacity="0.68"/>
<circle cx="1712.0" cy="184.8" r="2.1" fill="#454a48" fill-opacity="0.68"/>
<circle cx="1725.5" cy="138.8" r="2.1" fill="#454a48" fill-opacity="0.68"/>
<circle cx="1738.9" cy="173.7" r="2.1" fill="#454a48" fill-opacity="0.68"/>
<circle cx="1752.4" cy="231.7" r="2.1" fill="#454a48" fill-opacity="0.68"/>
<circle cx="1765.9" cy="167.0" r="2.1" fill="#454a48" fill-opacity="0.68"/>
<circle cx="1779.3" cy="196.6" r="2.1" fill="#454a48" fill-opacity="0.68"/>
<circle cx="1792.8" cy="165.0" r="2.1" fill="#454a48" fill-opacity="0.68"/>
<circle cx="1806.3" cy="172.1" r="2.1" fill="#454a48" fill-opacity="0.68"/>
<circle cx="1819.8" cy="235.0" r="2.1" fill="#454a48" fill-opacity="0.68"/>
<circle cx="1833.2" cy="133.9" r="2.1" fill="#454a48" fill-opacity="0.68"/>
<circle cx="1846.7" cy="187.7" r="2.1" fill="#454a48" fill-opacity="0.68"/>
<circle cx="1860.2" cy="235.0" r="2.1" fill="#454a48" fill-opacity="0.68"/>
<circle cx="1873.6" cy="225.0" r="2.1" fill="#454a48" fill-opacity="0.68"/>
<circle cx="1348.3" cy="110.6" r="2.1" fill="#454a48" fill-opacity="0.68"/>
<circle cx="1361.8" cy="179.2" r="2.1" fill="#454a48" fill-opacity="0.68"/>
<circle cx="1375.2" cy="139.9" r="2.1" fill="#454a48" fill-opacity="0.68"/>
<circle cx="1388.7" cy="146.2" r="2.1" fill="#454a48" fill-opacity="0.68"/>
<circle cx="1402.2" cy="110.0" r="2.1" fill="#454a48" fill-opacity="0.68"/>
<circle cx="1415.6" cy="169.9" r="2.1" fill="#454a48" fill-opacity="0.68"/>
<circle cx="1429.1" cy="204.3" r="2.1" fill="#454a48" fill-opacity="0.68"/>
<circle cx="1442.6" cy="119.9" r="2.1" fill="#454a48" fill-opacity="0.68"/>
<circle cx="1456.1" cy="164.4" r="2.1" fill="#454a48" fill-opacity="0.68"/>
<circle cx="1469.5" cy="98.2" r="2.1" fill="#454a48" fill-opacity="0.68"/>
<circle cx="1483.0" cy="243.2" r="2.1" fill="#454a48" fill-opacity="0.68"/>
<circle cx="1496.5" cy="211.7" r="2.1" fill="#454a48" fill-opacity="0.68"/>
<circle cx="1509.9" cy="104.4" r="2.1" fill="#454a48" fill-opacity="0.68"/>
<circle cx="1523.4" cy="233.2" r="2.1" fill="#454a48" fill-opacity="0.68"/>
<circle cx="1536.9" cy="115.1" r="2.1" fill="#454a48" fill-opacity="0.68"/>
<circle cx="1550.3" cy="214.3" r="2.1" fill="#454a48" fill-opacity="0.68"/>
<circle cx="1563.8" cy="206.1" r="2.1" fill="#454a48" fill-opacity="0.68"/>
<circle cx="1577.3" cy="91.5" r="2.1" fill="#454a48" fill-opacity="0.68"/>
<circle cx="1590.8" cy="179.9" r="2.1" fill="#454a48" fill-opacity="0.68"/>
<circle cx="1604.2" cy="163.9" r="2.1" fill="#454a48" fill-opacity="0.68"/>
<circle cx="1617.7" cy="203.9" r="2.1" fill="#454a48" fill-opacity="0.68"/>
<circle cx="1631.2" cy="117.7" r="2.1" fill="#454a48" fill-opacity="0.68"/>
<circle cx="1644.6" cy="129.9" r="2.1" fill="#454a48" fill-opacity="0.68"/>
<circle cx="1658.1" cy="110.6" r="2.1" fill="#454a48" fill-opacity="0.68"/>
<circle cx="1671.6" cy="147.0" r="2.1" fill="#454a48" fill-opacity="0.68"/>
<circle cx="1685.0" cy="175.0" r="2.1" fill="#454a48" fill-opacity="0.68"/>
<circle cx="1698.5" cy="200.3" r="2.1" fill="#454a48" fill-opacity="0.68"/>
<circle cx="1712.0" cy="155.5" r="2.1" fill="#454a48" fill-opacity="0.68"/>
<circle cx="1725.5" cy="211.7" r="2.1" fill="#454a48" fill-opacity="0.68"/>
<circle cx="1738.9" cy="102.8" r="2.1" fill="#454a48" fill-opacity="0.68"/>
<circle cx="1752.4" cy="165.0" r="2.1" fill="#454a48" fill-opacity="0.68"/>
<circle cx="1765.9" cy="239.4" r="2.1" fill="#454a48" fill-opacity="0.68"/>
<circle cx="1779.3" cy="192.1" r="2.1" fill="#454a48" fill-opacity="0.68"/>
<circle cx="1792.8" cy="187.0" r="2.1" fill="#454a48" fill-opacity="0.68"/>
<circle cx="1806.3" cy="161.7" r="2.1" fill="#454a48" fill-opacity="0.68"/>
<circle cx="1819.8" cy="123.9" r="2.1" fill="#454a48" fill-opacity="0.68"/>
<circle cx="1833.2" cy="144.8" r="2.1" fill="#454a48" fill-opacity="0.68"/>
<circle cx="1846.7" cy="159.9" r="2.1" fill="#454a48" fill-opacity="0.68"/>
<circle cx="1860.2" cy="90.0" r="2.1" fill="#454a48" fill-opacity="0.68"/>
<circle cx="1873.6" cy="194.8" r="2.1" fill="#454a48" fill-opacity="0.68"/>
<rect x="1349" y="90" width="1" height="154" fill="#000" />
<rect x="1349" y="243" width="526" height="1" fill="#000" />
<rect x="1350" y="90" width="4" height="1" fill="#000" />
<text x="1343.5" y="95.2" font-size="12" font-weight="normal" fill="#111" text-anchor="end" >9.87</text>
<rect x="1350" y="106" width="4" height="1" fill="#000" />
<text x="1343.5" y="111.2" font-size="12" font-weight="normal" fill="#111" text-anchor="end" >8.9</text>
<rect x="1350" y="121" width="4" height="1" fill="#000" />
<text x="1343.5" y="126.2" font-size="12" font-weight="normal" fill="#111" text-anchor="end" >7.93</text>
<rect x="1350" y="136" width="4" height="1" fill="#000" />
<text x="1343.5" y="141.2" font-size="12" font-weight="normal" fill="#111" text-anchor="end" >6.96</text>
<rect x="1350" y="152" width="4" height="1" fill="#000" />
<text x="1343.5" y="157.2" font-size="12" font-weight="normal" fill="#111" text-anchor="end" >5.99</text>
<rect x="1350" y="167" width="4" height="1" fill="#000" />
<text x="1343.5" y="172.2" font-size="12" font-weight="normal" fill="#111" text-anchor="end" >5.03</text>
<rect x="1350" y="182" width="4" height="1" fill="#000" />
<text x="1343.5" y="187.2" font-size="12" font-weight="normal" fill="#111" text-anchor="end" >4.06</text>
<rect x="1350" y="198" width="4" height="1" fill="#000" />
<text x="1343.5" y="203.2" font-size="12" font-weight="normal" fill="#111" text-anchor="end" >3.09</text>
<rect x="1350" y="213" width="4" height="1" fill="#000" />
<text x="1343.5" y="218.2" font-size="12" font-weight="normal" fill="#111" text-anchor="end" >2.12</text>
<rect x="1350" y="228" width="4" height="1" fill="#000" />
<text x="1343.5" y="233.2" font-size="12" font-weight="normal" fill="#111" text-anchor="end" >1.15</text>
<rect x="1350" y="243" width="4" height="1" fill="#000" />
<text x="1343.5" y="248.2" font-size="12" font-weight="normal" fill="#111" text-anchor="end" >0.18</text>
<rect x="1362" y="239" width="1" height="4" fill="#000" />
<rect x="1375" y="239" width="1" height="4" fill="#000" />
<rect x="1389" y="239" width="1" height="4" fill="#000" />
<rect x="1402" y="239" width="1" height="4" fill="#000" />
<rect x="1416" y="239" width="1" height="4" fill="#000" />
<rect x="1429" y="239" width="1" height="4" fill="#000" />
<rect x="1443" y="239" width="1" height="4" fill="#000" />
<rect x="1456" y="239" width="1" height="4" fill="#000" />
<rect x="1470" y="239" width="1" height="4" fill="#000" />
<rect x="1483" y="239" width="1" height="4" fill="#000" />
<rect x="1496" y="239" width="1" height="4" fill="#000" />
<rect x="1510" y="239" width="1" height="4" fill="#000" />
<rect x="1523" y="239" width="1" height="4" fill="#000" />
<rect x="1537" y="239" width="1" height="4" fill="#000" />
<rect x="1550" y="239" width="1" height="4" fill="#000" />
<rect x="1564" y="239" width="1" height="4" fill="#000" />
<rect x="1577" y="239" width="1" height="4" fill="#000" />
<rect x="1591" y="239" width="1" height="4" fill="#000" />
<rect x="1604" y="239" width="1" height="4" fill="#000" />
<rect x="1618" y="239" width="1" height="4" fill="#000" />
<rect x="1631" y="239" width="1" height="4" fill="#000" />
<rect x="1645" y="239" width="1" height="4" fill="#000" />
<rect x="1658" y="239" width="1" height="4" fill="#000" />
<rect x="1672" y="239" width="1" height="4" fill="#000" />
<rect x="1685" y="239" width="1" height="4" fill="#000" />
<rect x="1699" y="239" width="1" height="4" fill="#000" />
<rect x="1712" y="239" width="1" height="4" fill="#000" />
<rect x="1725" y="239" width="1" height="4" fill="#000" />
<rect x="1739" y="239" width="1" height="4" fill="#000" />
<rect x="1752" y="239" width="1" height="4" fill="#000" />
<rect x="1766" y="239" width="1" height="4" fill="#000" />
<rect x="1779" y="239" width="1" height="4" fill="#000" />
<rect x="1793" y="239" width="1" height="4" fill="#000" />
<rect x="1806" y="239" width="1" height="4" fill="#000" />
<rect x="1820" y="239" width="1" height="4" fill="#000" />
<rect x="1833" y="239" width="1" height="4" fill="#000" />
<rect x="1847" y="239" width="1" height="4" fill="#000" />
<rect x="1860" y="239" width="1" height="4" fill="#000" />
<rect x="1874" y="239" width="1" height="4" fill="#000" />
<text x="1349.3" y="262" font-size="12" font-weight="normal" fill="#111" text-anchor="middle" >0</text>
<text x="1389.71" y="262" font-size="12" font-weight="normal" fill="#111" text-anchor="middle" >3</text>
<text x="1430.12" y="262" font-size="12" font-weight="normal" fill="#111" text-anchor="middle" >6</text>
<text x="1470.53" y="262" font-size="12" font-weight="normal" fill="#111" text-anchor="middle" >9</text>
<text x="1510.94" y="262" font-size="12" font-weight="normal" fill="#111" text-anchor="middle" >12</text>
<text x="1551.35" y="262" font-size="12" font-weight="normal" fill="#111" text-anchor="middle" >15</text>
<text x="1591.76" y="262" font-size="12" font-weight="normal" fill="#111" text-anchor="middle" >18</text>
<text x="1632.17" y="262" font-size="12" font-weight="normal" fill="#111" text-anchor="middle" >21</text>
<text x="1672.58" y="262" font-size="12" font-weight="normal" fill="#111" text-anchor="middle" >24</text>
<text x="1712.99" y="262" font-size="12" font-weight="normal" fill="#111" text-anchor="middle" >27</text>
<text x="1753.4" y="262" font-size="12" font-weight="normal" fill="#111" text-anchor="middle" >30</text>
<text x="1793.81" y="262" font-size="12" font-weight="normal" fill="#111" text-anchor="middle" >33</text>
<text x="1834.22" y="262" font-size="12" font-weight="normal" fill="#111" text-anchor="middle" >36</text>
<text x="1874.63" y="262" font-size="12" font-weight="normal" fill="#111" text-anchor="middle" >39</text>
<rect x="1350" y="334" width="525" height="153" fill="#fff" />
<rect x="1350" y="334" width="525" height="1" fill="rgba(0,0,0,0.16)" />
<rect x="1350" y="350" width="525" height="1" fill="rgba(0,0,0,0.16)" />
<rect x="1350" y="365" width="525" height="1" fill="rgba(0,0,0,0.16)" />
<rect x="1350" y="380" width="525" height="1" fill="rgba(0,0,0,0.16)" />
<rect x="1350" y="396" width="525" height="1" fill="rgba(0,0,0,0.16)" />
<rect x="1350" y="411" width="525" height="1" fill="rgba(0,0,0,0.16)" />
<rect x="1350" y="426" width="525" height="1" fill="rgba(0,0,0,0.16)" />
<rect x="1350" y="442" width="525" height="1" fill="rgba(0,0,0,0.16)" />
<rect x="1350" y="457" width="525" height="1" fill="rgba(0,0,0,0.16)" />
<rect x="1350" y="472" width="525" height="1" fill="rgba(0,0,0,0.16)" />
<rect x="1350" y="487" width="525" height="1" fill="rgba(0,0,0,0.16)" />
<rect x="1389" y="334" width="1" height="153" fill="rgba(0,0,0,0.16)" />
<rect x="1429" y="334" width="1" height="153" fill="rgba(0,0,0,0.16)" />
<rect x="1470" y="334" width="1" height="153" fill="rgba(0,0,0,0.16)" />
<rect x="1510" y="334" width="1" height="153" fill="rgba(0,0,0,0.16)" />
<rect x="1550" y="334" width="1" height="153" fill="rgba(0,0,0,0.16)" />
<rect x="1591" y="334" width="1" height="153" fill="rgba(0,0,0,0.16)" />
<rect x="1631" y="334" width="1" height="153" fill="rgba(0,0,0,0.16)" />
<rect x="1672" y="334" width="1" height="153" fill="rgba(0,0,0,0.16)" />
<rect x="1712" y="334" width="1" height="153" fill="rgba(0,0,0,0.16)" />
<rect x="1752" y="334" width="1" height="153" fill="rgba(0,0,0,0.16)" />
<rect x="1793" y="334" width="1" height="153" fill="rgba(0,0,0,0.16)" />
<rect x="1833" y="334" width="1" height="153" fill="rgba(0,0,0,0.16)" />
<rect x="1874" y="334" width="1" height="153" fill="rgba(0,0,0,0.16)" />
<rect x="1874" y="334" width="1" height="153" fill="rgba(0,0,0,0.16)" />
<polyline points="1348.3,333.9 1361.8,372.1 1375.2,370.1 1388.7,341.9 1402.2,395.6 1415.6,478.9 1429.1,387.8 1442.6,400.0 1456.1,390.9 1469.5,403.8 1483.0,442.0 1496.5,338.3 1509.9,380.0 1523.4,389.8 1536.9,438.9 1550.3,460.9 1563.8,373.8 1577.3,390.9 1590.8,345.6 1604.2,479.8 1617.7,390.0 1631.2,474.9 1644.6,454.2 1658.1,353.8 1671.6,370.1 1685.0,383.8 1698.5,455.6 1712.0,370.9 1725.5,458.9 1738.9,399.8 1752.4,448.9 1765.9,370.9 1779.3,393.8 1792.8,408.7 1806.3,344.5 1819.8,400.5 1833.2,440.9 1846.7,433.8 1860.2,442.7 1873.6,359.0" fill="none" stroke="#f09a48" stroke-width="2.2" stroke-linejoin="round" stroke-linecap="round"/>
<polyline points="1348.3,450.4 1361.8,483.3 1375.2,477.1 1388.7,366.7 1402.2,424.2 1415.6,350.1 1429.1,376.7 1442.6,392.3 1456.1,398.9 1469.5,455.6 1483.0,412.7 1496.5,335.0 1509.9,368.9 1523.4,487.1 1536.9,422.7 1550.3,472.0 1563.8,454.2 1577.3,424.2 1590.8,355.6 1604.2,356.1 1617.7,414.9 1631.2,429.3 1644.6,476.0 1658.1,468.9 1671.6,387.6 1685.0,337.2 1698.5,448.9 1712.0,471.1 1725.5,356.1 1738.9,471.1 1752.4,430.0 1765.9,373.2 1779.3,473.1 1792.8,454.2 1806.3,355.0 1819.8,345.0 1833.2,416.0 1846.7,387.8 1860.2,336.1 1873.6,482.6" fill="none" stroke="#e44456" stroke-width="2.2" stroke-linejoin="round" stroke-linecap="round"/>
<circle cx="1348.3" cy="333.9" r="2.1" fill="#454a48" fill-opacity="0.68"/>
<circle cx="1361.8" cy="372.1" r="2.1" fill="#454a48" fill-opacity="0.68"/>
<circle cx="1375.2" cy="370.1" r="2.1" fill="#454a48" fill-opacity="0.68"/>
<circle cx="1388.7" cy="341.9" r="2.1" fill="#454a48" fill-opacity="0.68"/>
<circle cx="1402.2" cy="395.6" r="2.1" fill="#454a48" fill-opacity="0.68"/>
<circle cx="1415.6" cy="478.9" r="2.1" fill="#454a48" fill-opacity="0.68"/>
<circle cx="1429.1" cy="387.8" r="2.1" fill="#454a48" fill-opacity="0.68"/>
<circle cx="1442.6" cy="400.0" r="2.1" fill="#454a48" fill-opacity="0.68"/>
<circle cx="1456.1" cy="390.9" r="2.1" fill="#454a48" fill-opacity="0.68"/>
<circle cx="1469.5" cy="403.8" r="2.1" fill="#454a48" fill-opacity="0.68"/>
<circle cx="1483.0" cy="442.0" r="2.1" fill="#454a48" fill-opacity="0.68"/>
<circle cx="1496.5" cy="338.3" r="2.1" fill="#454a48" fill-opacity="0.68"/>
<circle cx="1509.9" cy="380.0" r="2.1" fill="#454a48" fill-opacity="0.68"/>
<circle cx="1523.4" cy="389.8" r="2.1" fill="#454a48" fill-opacity="0.68"/>
<circle cx="1536.9" cy="438.9" r="2.1" fill="#454a48" fill-opacity="0.68"/>
<circle cx="1550.3" cy="460.9" r="2.1" fill="#454a48" fill-opacity="0.68"/>
<circle cx="1563.8" cy="373.8" r="2.1" fill="#454a48" fill-opacity="0.68"/>
<circle cx="1577.3" cy="390.9" r="2.1" fill="#454a48" fill-opacity="0.68"/>
<circle cx="1590.8" cy="345.6" r="2.1" fill="#454a48" fill-opacity="0.68"/>
<circle cx="1604.2" cy="479.8" r="2.1" fill="#454a48" fill-opacity="0.68"/>
<circle cx="1617.7" cy="390.0" r="2.1" fill="#454a48" fill-opacity="0.68"/>
<circle cx="1631.2" cy="474.9" r="2.1" fill="#454a48" fill-opacity="0.68"/>
<circle cx="1644.6" cy="454.2" r="2.1" fill="#454a48" fill-opacity="0.68"/>
<circle cx="1658.1" cy="353.8" r="2.1" fill="#454a48" fill-opacity="0.68"/>
<circle cx="1671.6" cy="370.1" r="2.1" fill="#454a48" fill-opacity="0.68"/>
<circle cx="1685.0" cy="383.8" r="2.1" fill="#454a48" fill-opacity="0.68"/>
<circle cx="1698.5" cy="455.6" r="2.1" fill="#454a48" fill-opacity="0.68"/>
<circle cx="1712.0" cy="370.9" r="2.1" fill="#454a48" fill-opacity="0.68"/>
<circle cx="1725.5" cy="458.9" r="2.1" fill="#454a48" fill-opacity="0.68"/>
<circle cx="1738.9" cy="399.8" r="2.1" fill="#454a48" fill-opacity="0.68"/>
<circle cx="1752.4" cy="448.9" r="2.1" fill="#454a48" fill-opacity="0.68"/>
<circle cx="1765.9" cy="370.9" r="2.1" fill="#454a48" fill-opacity="0.68"/>
<circle cx="1779.3" cy="393.8" r="2.1" fill="#454a48" fill-opacity="0.68"/>
<circle cx="1792.8" cy="408.7" r="2.1" fill="#454a48" fill-opacity="0.68"/>
<circle cx="1806.3" cy="344.5" r="2.1" fill="#454a48" fill-opacity="0.68"/>
<circle cx="1819.8" cy="400.5" r="2.1" fill="#454a48" fill-opacity="0.68"/>
<circle cx="1833.2" cy="440.9" r="2.1" fill="#454a48" fill-opacity="0.68"/>
<circle cx="1846.7" cy="433.8" r="2.1" fill="#454a48" fill-opacity="0.68"/>
<circle cx="1860.2" cy="442.7" r="2.1" fill="#454a48" fill-opacity="0.68"/>
<circle cx="1873.6" cy="359.0" r="2.1" fill="#454a48" fill-opacity="0.68"/>
<circle cx="1348.3" cy="450.4" r="2.1" fill="#454a48" fill-opacity="0.68"/>
<circle cx="1361.8" cy="483.3" r="2.1" fill="#454a48" fill-opacity="0.68"/>
<circle cx="1375.2" cy="477.1" r="2.1" fill="#454a48" fill-opacity="0.68"/>
<circle cx="1388.7" cy="366.7" r="2.1" fill="#454a48" fill-opacity="0.68"/>
<circle cx="1402.2" cy="424.2" r="2.1" fill="#454a48" fill-opacity="0.68"/>
<circle cx="1415.6" cy="350.1" r="2.1" fill="#454a48" fill-opacity="0.68"/>
<circle cx="1429.1" cy="376.7" r="2.1" fill="#454a48" fill-opacity="0.68"/>
<circle cx="1442.6" cy="392.3" r="2.1" fill="#454a48" fill-opacity="0.68"/>
<circle cx="1456.1" cy="398.9" r="2.1" fill="#454a48" fill-opacity="0.68"/>
<circle cx="1469.5" cy="455.6" r="2.1" fill="#454a48" fill-opacity="0.68"/>
<circle cx="1483.0" cy="412.7" r="2.1" fill="#454a48" fill-opacity="0.68"/>
<circle cx="1496.5" cy="335.0" r="2.1" fill="#454a48" fill-opacity="0.68"/>
<circle cx="1509.9" cy="368.9" r="2.1" fill="#454a48" fill-opacity="0.68"/>
<circle cx="1523.4" cy="487.1" r="2.1" fill="#454a48" fill-opacity="0.68"/>
<circle cx="1536.9" cy="422.7" r="2.1" fill="#454a48" fill-opacity="0.68"/>
<circle cx="1550.3" cy="472.0" r="2.1" fill="#454a48" fill-opacity="0.68"/>
<circle cx="1563.8" cy="454.2" r="2.1" fill="#454a48" fill-opacity="0.68"/>
<circle cx="1577.3" cy="424.2" r="2.1" fill="#454a48" fill-opacity="0.68"/>
<circle cx="1590.8" cy="355.6" r="2.1" fill="#454a48" fill-opacity="0.68"/>
<circle cx="1604.2" cy="356.1" r="2.1" fill="#454a48" fill-opacity="0.68"/>
<circle cx="1617.7" cy="414.9" r="2.1" fill="#454a48" fill-opacity="0.68"/>
<circle cx="1631.2" cy="429.3" r="2.1" fill="#454a48" fill-opacity="0.68"/>
<circle cx="1644.6" cy="476.0" r="2.1" fill="#454a48" fill-opacity="0.68"/>
<circle cx="1658.1" cy="468.9" r="2.1" fill="#454a48" fill-opacity="0.68"/>
<circle cx="1671.6" cy="387.6" r="2.1" fill="#454a48" fill-opacity="0.68"/>
<circle cx="1685.0" cy="337.2" r="2.1" fill="#454a48" fill-opacity="0.68"/>
<circle cx="1698.5" cy="448.9" r="2.1" fill="#454a48" fill-opacity="0.68"/>
<circle cx="1712.0" cy="471.1" r="2.1" fill="#454a48" fill-opacity="0.68"/>
<circle cx="1725.5" cy="356.1" r="2.1" fill="#454a48" fill-opacity="0.68"/>
<circle cx="1738.9" cy="471.1" r="2.1" fill="#454a48" fill-opacity="0.68"/>
<circle cx="1752.4" cy="430.0" r="2.1" fill="#454a48" fill-opacity="0.68"/>
<circle cx="1765.9" cy="373.2" r="2.1" fill="#454a48" fill-opacity="0.68"/>
<circle cx="1779.3" cy="473.1" r="2.1" fill="#454a48" fill-opacity="0.68"/>
<circle cx="1792.8" cy="454.2" r="2.1" fill="#454a48" fill-opacity="0.68"/>
<circle cx="1806.3" cy="355.0" r="2.1" fill="#454a48" fill-opacity="0.68"/>
<circle cx="1819.8" cy="345.0" r="2.1" fill="#454a48" fill-opacity="0.68"/>
<circle cx="1833.2" cy="416.0" r="2.1" fill="#454a48" fill-opacity="0.68"/>
<circle cx="1846.7" cy="387.8" r="2.1" fill="#454a48" fill-opacity="0.68"/>
<circle cx="1860.2" cy="336.1" r="2.1" fill="#454a48" fill-opacity="0.68"/>
<circle cx="1873.6" cy="482.6" r="2.1" fill="#454a48" fill-opacity="0.68"/>
<rect x="1349" y="334" width="1" height="154" fill="#000" />
<rect x="1349" y="487" width="526" height="1" fill="#000" />
<rect x="1350" y="334" width="4" height="1" fill="#000" />
<text x="1343.5" y="339.2" font-size="12" font-weight="normal" fill="#111" text-anchor="end" >9.98</text>
<rect x="1350" y="350" width="4" height="1" fill="#000" />
<text x="1343.5" y="355.2" font-size="12" font-weight="normal" fill="#111" text-anchor="end" >8.99</text>
<rect x="1350" y="365" width="4" height="1" fill="#000" />
<text x="1343.5" y="370.2" font-size="12" font-weight="normal" fill="#111" text-anchor="end" >8.0</text>
<rect x="1350" y="380" width="4" height="1" fill="#000" />
<text x="1343.5" y="385.2" font-size="12" font-weight="normal" fill="#111" text-anchor="end" >7.01</text>
<rect x="1350" y="396" width="4" height="1" fill="#000" />
<text x="1343.5" y="401.2" font-size="12" font-weight="normal" fill="#111" text-anchor="end" >6.01</text>
<rect x="1350" y="411" width="4" height="1" fill="#000" />
<text x="1343.5" y="416.2" font-size="12" font-weight="normal" fill="#111" text-anchor="end" >5.02</text>
<rect x="1350" y="426" width="4" height="1" fill="#000" />
<text x="1343.5" y="431.2" font-size="12" font-weight="normal" fill="#111" text-anchor="end" >4.03</text>
<rect x="1350" y="442" width="4" height="1" fill="#000" />
<text x="1343.5" y="447.2" font-size="12" font-weight="normal" fill="#111" text-anchor="end" >3.03</text>
<rect x="1350" y="457" width="4" height="1" fill="#000" />
<text x="1343.5" y="462.2" font-size="12" font-weight="normal" fill="#111" text-anchor="end" >2.04</text>
<rect x="1350" y="472" width="4" height="1" fill="#000" />
<text x="1343.5" y="477.2" font-size="12" font-weight="normal" fill="#111" text-anchor="end" >1.05</text>
<rect x="1350" y="487" width="4" height="1" fill="#000" />
<text x="1343.5" y="492.2" font-size="12" font-weight="normal" fill="#111" text-anchor="end" >0.06</text>
<rect x="1362" y="483" width="1" height="4" fill="#000" />
<rect x="1375" y="483" width="1" height="4" fill="#000" />
<rect x="1389" y="483" width="1" height="4" fill="#000" />
<rect x="1402" y="483" width="1" height="4" fill="#000" />
<rect x="1416" y="483" width="1" height="4" fill="#000" />
<rect x="1429" y="483" width="1" height="4" fill="#000" />
<rect x="1443" y="483" width="1" height="4" fill="#000" />
<rect x="1456" y="483" width="1" height="4" fill="#000" />
<rect x="1470" y="483" width="1" height="4" fill="#000" />
<rect x="1483" y="483" width="1" height="4" fill="#000" />
<rect x="1496" y="483" width="1" height="4" fill="#000" />
<rect x="1510" y="483" width="1" height="4" fill="#000" />
<rect x="1523" y="483" width="1" height="4" fill="#000" />
<rect x="1537" y="483" width="1" height="4" fill="#000" />
<rect x="1550" y="483" width="1" height="4" fill="#000" />
<rect x="1564" y="483" width="1" height="4" fill="#000" />
<rect x="1577" y="483" width="1" height="4" fill="#000" />
<rect x="1591" y="483" width="1" height="4" fill="#000" />
<rect x="1604" y="483" width="1" height="4" fill="#000" />
<rect x="1618" y="483" width="1" height="4" fill="#000" />
<rect x="1631" y="483" width="1" height="4" fill="#000" />
<rect x="1645" y="483" width="1" height="4" fill="#000" />
<rect x="1658" y="483" width="1" height="4" fill="#000" />
<rect x="1672" y="483" width="1" height="4" fill="#000" />
<rect x="1685" y="483" width="1" height="4" fill="#000" />
<rect x="1699" y="483" width="1" height="4" fill="#000" />
<rect x="1712" y="483" width="1" height="4" fill="#000" />
<rect x="1725" y="483" width="1" height="4" fill="#000" />
<rect x="1739" y="483" width="1" height="4" fill="#000" />
<rect x="1752" y="483" width="1" height="4" fill="#000" />
<rect x="1766" y="483" width="1" height="4" fill="#000" />
<rect x="1779" y="483" width="1" height="4" fill="#000" />
<rect x="1793" y="483" width="1" height="4" fill="#000" />
<rect x="1806" y="483" width="1" height="4" fill="#000" />
<rect x="1820" y="483" width="1" height="4" fill="#000" />
<rect x="1833" y="483" width="1" height="4" fill="#000" />
<rect x="1847" y="483" width="1" height="4" fill="#000" />
<rect x="1860" y="483" width="1" height="4" fill="#000" />
<rect x="1874" y="483" width="1" height="4" fill="#000" />
<text x="1349.3" y="506" font-size="12" font-weight="normal" fill="#111" text-anchor="middle" >0</text>
<text x="1389.71" y="506" font-size="12" font-weight="normal" fill="#111" text-anchor="middle" >3</text>
<text x="1430.12" y="506" font-size="12" font-weight="normal" fill="#111" text-anchor="middle" >6</text>
<text x="1470.53" y="506" font-size="12" font-weight="normal" fill="#111" text-anchor="middle" >9</text>
<text x="1510.94" y="506" font-size="12" font-weight="normal" fill="#111" text-anchor="middle" >12</text>
<text x="1551.35" y="506" font-size="12" font-weight="normal" fill="#111" text-anchor="middle" >15</text>
<text x="1591.76" y="506" font-size="12" font-weight="normal" fill="#111" text-anchor="middle" >18</text>
<text x="1632.17" y="506" font-size="12" font-weight="normal" fill="#111" text-anchor="middle" >21</text>
<text x="1672.58" y="506" font-size="12" font-weight="normal" fill="#111" text-anchor="middle" >24</text>
<text x="1712.99" y="506" font-size="12" font-weight="normal" fill="#111" text-anchor="middle" >27</text>
<text x="1753.4" y="506" font-size="12" font-weight="normal" fill="#111" text-anchor="middle" >30</text>
<text x="1793.81" y="506" font-size="12" font-weight="normal" fill="#111" text-anchor="middle" >33</text>
<text x="1834.22" y="506" font-size="12" font-weight="normal" fill="#111" text-anchor="middle" >36</text>
<text x="1874.63" y="506" font-size="12" font-weight="normal" fill="#111" text-anchor="middle" >39</text>
<rect x="1350" y="578" width="525" height="153" fill="#fff" />
<rect x="1350" y="578" width="525" height="1" fill="rgba(0,0,0,0.16)" />
<rect x="1350" y="594" width="525" height="1" fill="rgba(0,0,0,0.16)" />
<rect x="1350" y="609" width="525" height="1" fill="rgba(0,0,0,0.16)" />
<rect x="1350" y="624" width="525" height="1" fill="rgba(0,0,0,0.16)" />
<rect x="1350" y="640" width="525" height="1" fill="rgba(0,0,0,0.16)" />
<rect x="1350" y="655" width="525" height="1" fill="rgba(0,0,0,0.16)" />
<rect x="1350" y="670" width="525" height="1" fill="rgba(0,0,0,0.16)" />
<rect x="1350" y="686" width="525" height="1" fill="rgba(0,0,0,0.16)" />
<rect x="1350" y="701" width="525" height="1" fill="rgba(0,0,0,0.16)" />
<rect x="1350" y="716" width="525" height="1" fill="rgba(0,0,0,0.16)" />
<rect x="1350" y="731" width="525" height="1" fill="rgba(0,0,0,0.16)" />
<rect x="1389" y="578" width="1" height="153" fill="rgba(0,0,0,0.16)" />
<rect x="1429" y="578" width="1" height="153" fill="rgba(0,0,0,0.16)" />
<rect x="1470" y="578" width="1" height="153" fill="rgba(0,0,0,0.16)" />
<rect x="1510" y="578" width="1" height="153" fill="rgba(0,0,0,0.16)" />
<rect x="1550" y="578" width="1" height="153" fill="rgba(0,0,0,0.16)" />
<rect x="1591" y="578" width="1" height="153" fill="rgba(0,0,0,0.16)" />
<rect x="1631" y="578" width="1" height="153" fill="rgba(0,0,0,0.16)" />
<rect x="1672" y="578" width="1" height="153" fill="rgba(0,0,0,0.16)" />
<rect x="1712" y="578" width="1" height="153" fill="rgba(0,0,0,0.16)" />
<rect x="1752" y="578" width="1" height="153" fill="rgba(0,0,0,0.16)" />
<rect x="1793" y="578" width="1" height="153" fill="rgba(0,0,0,0.16)" />
<rect x="1833" y="578" width="1" height="153" fill="rgba(0,0,0,0.16)" />
<rect x="1874" y="578" width="1" height="153" fill="rgba(0,0,0,0.16)" />
<rect x="1874" y="578" width="1" height="153" fill="rgba(0,0,0,0.16)" />
<polyline points="1348.3,594.6 1361.8,663.9 1375.2,723.9 1388.7,627.9 1402.2,645.0 1415.6,653.0 1429.1,679.0 1442.6,582.0 1456.1,715.7 1469.5,599.1 1483.0,618.6 1496.5,636.8 1509.9,640.1 1523.4,722.8 1536.9,623.9 1550.3,700.1 1563.8,730.8 1577.3,621.3 1590.8,659.0 1604.2,681.9 1617.7,687.9 1631.2,669.0 1644.6,674.6 1658.1,614.6 1671.6,620.2 1685.0,704.1 1698.5,671.9 1712.0,624.2 1725.5,599.7 1738.9,656.8 1752.4,584.2 1765.9,630.8 1779.3,619.7 1792.8,616.2 1806.3,621.9 1819.8,690.8 1833.2,634.2 1846.7,706.8 1860.2,627.9 1873.6,715.2" fill="none" stroke="#46dcc6" stroke-width="2.0" stroke-linejoin="round" stroke-linecap="round"/>
<polyline points="1348.3,592.4 1361.8,621.3 1375.2,720.1 1388.7,705.0 1402.2,695.0 1415.6,709.0 1429.1,600.8 1442.6,652.4 1456.1,647.3 1469.5,600.8 1483.0,602.0 1496.5,727.9 1509.9,691.2 1523.4,578.0 1536.9,639.5 1550.3,700.6 1563.8,691.2 1577.3,638.6 1590.8,699.0 1604.2,627.9 1617.7,593.1 1631.2,694.1 1644.6,690.1 1658.1,604.2 1671.6,615.1 1685.0,640.1 1698.5,600.8 1712.0,681.9 1725.5,690.1 1738.9,711.9 1752.4,593.1 1765.9,703.0 1779.3,602.0 1792.8,661.2 1806.3,723.9 1819.8,640.1 1833.2,603.1 1846.7,720.8 1860.2,605.3 1873.6,626.8" fill="none" stroke="#4848cc" stroke-width="2.2" stroke-linejoin="round" stroke-linecap="round"/>
<circle cx="1348.3" cy="594.6" r="2.1" fill="#454a48" fill-opacity="0.68"/>
<circle cx="1361.8" cy="663.9" r="2.1" fill="#454a48" fill-opacity="0.68"/>
<circle cx="1375.2" cy="723.9" r="2.1" fill="#454a48" fill-opacity="0.68"/>
<circle cx="1388.7" cy="627.9" r="2.1" fill="#454a48" fill-opacity="0.68"/>
<circle cx="1402.2" cy="645.0" r="2.1" fill="#454a48" fill-opacity="0.68"/>
<circle cx="1415.6" cy="653.0" r="2.1" fill="#454a48" fill-opacity="0.68"/>
<circle cx="1429.1" cy="679.0" r="2.1" fill="#454a48" fill-opacity="0.68"/>
<circle cx="1442.6" cy="582.0" r="2.1" fill="#454a48" fill-opacity="0.68"/>
<circle cx="1456.1" cy="715.7" r="2.1" fill="#454a48" fill-opacity="0.68"/>
<circle cx="1469.5" cy="599.1" r="2.1" fill="#454a48" fill-opacity="0.68"/>
<circle cx="1483.0" cy="618.6" r="2.1" fill="#454a48" fill-opacity="0.68"/>
<circle cx="1496.5" cy="636.8" r="2.1" fill="#454a48" fill-opacity="0.68"/>
<circle cx="1509.9" cy="640.1" r="2.1" fill="#454a48" fill-opacity="0.68"/>
<circle cx="1523.4" cy="722.8" r="2.1" fill="#454a48" fill-opacity="0.68"/>
<circle cx="1536.9" cy="623.9" r="2.1" fill="#454a48" fill-opacity="0.68"/>
<circle cx="1550.3" cy="700.1" r="2.1" fill="#454a48" fill-opacity="0.68"/>
<circle cx="1563.8" cy="730.8" r="2.1" fill="#454a48" fill-opacity="0.68"/>
<circle cx="1577.3" cy="621.3" r="2.1" fill="#454a48" fill-opacity="0.68"/>
<circle cx="1590.8" cy="659.0" r="2.1" fill="#454a48" fill-opacity="0.68"/>
<circle cx="1604.2" cy="681.9" r="2.1" fill="#454a48" fill-opacity="0.68"/>
<circle cx="1617.7" cy="687.9" r="2.1" fill="#454a48" fill-opacity="0.68"/>
<circle cx="1631.2" cy="669.0" r="2.1" fill="#454a48" fill-opacity="0.68"/>
<circle cx="1644.6" cy="674.6" r="2.1" fill="#454a48" fill-opacity="0.68"/>
<circle cx="1658.1" cy="614.6" r="2.1" fill="#454a48" fill-opacity="0.68"/>
<circle cx="1671.6" cy="620.2" r="2.1" fill="#454a48" fill-opacity="0.68"/>
<circle cx="1685.0" cy="704.1" r="2.1" fill="#454a48" fill-opacity="0.68"/>
<circle cx="1698.5" cy="671.9" r="2.1" fill="#454a48" fill-opacity="0.68"/>
<circle cx="1712.0" cy="624.2" r="2.1" fill="#454a48" fill-opacity="0.68"/>
<circle cx="1725.5" cy="599.7" r="2.1" fill="#454a48" fill-opacity="0.68"/>
<circle cx="1738.9" cy="656.8" r="2.1" fill="#454a48" fill-opacity="0.68"/>
<circle cx="1752.4" cy="584.2" r="2.1" fill="#454a48" fill-opacity="0.68"/>
<circle cx="1765.9" cy="630.8" r="2.1" fill="#454a48" fill-opacity="0.68"/>
<circle cx="1779.3" cy="619.7" r="2.1" fill="#454a48" fill-opacity="0.68"/>
<circle cx="1792.8" cy="616.2" r="2.1" fill="#454a48" fill-opacity="0.68"/>
<circle cx="1806.3" cy="621.9" r="2.1" fill="#454a48" fill-opacity="0.68"/>
<circle cx="1819.8" cy="690.8" r="2.1" fill="#454a48" fill-opacity="0.68"/>
<circle cx="1833.2" cy="634.2" r="2.1" fill="#454a48" fill-opacity="0.68"/>
<circle cx="1846.7" cy="706.8" r="2.1" fill="#454a48" fill-opacity="0.68"/>
<circle cx="1860.2" cy="627.9" r="2.1" fill="#454a48" fill-opacity="0.68"/>
<circle cx="1873.6" cy="715.2" r="2.1" fill="#454a48" fill-opacity="0.68"/>
<circle cx="1348.3" cy="592.4" r="2.1" fill="#454a48" fill-opacity="0.68"/>
<circle cx="1361.8" cy="621.3" r="2.1" fill="#454a48" fill-opacity="0.68"/>
<circle cx="1375.2" cy="720.1" r="2.1" fill="#454a48" fill-opacity="0.68"/>
<circle cx="1388.7" cy="705.0" r="2.1" fill="#454a48" fill-opacity="0.68"/>
<circle cx="1402.2" cy="695.0" r="2.1" fill="#454a48" fill-opacity="0.68"/>
<circle cx="1415.6" cy="709.0" r="2.1" fill="#454a48" fill-opacity="0.68"/>
<circle cx="1429.1" cy="600.8" r="2.1" fill="#454a48" fill-opacity="0.68"/>
<circle cx="1442.6" cy="652.4" r="2.1" fill="#454a48" fill-opacity="0.68"/>
<circle cx="1456.1" cy="647.3" r="2.1" fill="#454a48" fill-opacity="0.68"/>
<circle cx="1469.5" cy="600.8" r="2.1" fill="#454a48" fill-opacity="0.68"/>
<circle cx="1483.0" cy="602.0" r="2.1" fill="#454a48" fill-opacity="0.68"/>
<circle cx="1496.5" cy="727.9" r="2.1" fill="#454a48" fill-opacity="0.68"/>
<circle cx="1509.9" cy="691.2" r="2.1" fill="#454a48" fill-opacity="0.68"/>
<circle cx="1523.4" cy="578.0" r="2.1" fill="#454a48" fill-opacity="0.68"/>
<circle cx="1536.9" cy="639.5" r="2.1" fill="#454a48" fill-opacity="0.68"/>
<circle cx="1550.3" cy="700.6" r="2.1" fill="#454a48" fill-opacity="0.68"/>
<circle cx="1563.8" cy="691.2" r="2.1" fill="#454a48" fill-opacity="0.68"/>
<circle cx="1577.3" cy="638.6" r="2.1" fill="#454a48" fill-opacity="0.68"/>
<circle cx="1590.8" cy="699.0" r="2.1" fill="#454a48" fill-opacity="0.68"/>
<circle cx="1604.2" cy="627.9" r="2.1" fill="#454a48" fill-opacity="0.68"/>
<circle cx="1617.7" cy="593.1" r="2.1" fill="#454a48" fill-opacity="0.68"/>
<circle cx="1631.2" cy="694.1" r="2.1" fill="#454a48" fill-opacity="0.68"/>
<circle cx="1644.6" cy="690.1" r="2.1" fill="#454a48" fill-opacity="0.68"/>
<circle cx="1658.1" cy="604.2" r="2.1" fill="#454a48" fill-opacity="0.68"/>
<circle cx="1671.6" cy="615.1" r="2.1" fill="#454a48" fill-opacity="0.68"/>
<circle cx="1685.0" cy="640.1" r="2.1" fill="#454a48" fill-opacity="0.68"/>
<circle cx="1698.5" cy="600.8" r="2.1" fill="#454a48" fill-opacity="0.68"/>
<circle cx="1712.0" cy="681.9" r="2.1" fill="#454a48" fill-opacity="0.68"/>
<circle cx="1725.5" cy="690.1" r="2.1" fill="#454a48" fill-opacity="0.68"/>
<circle cx="1738.9" cy="711.9" r="2.1" fill="#454a48" fill-opacity="0.68"/>
<circle cx="1752.4" cy="593.1" r="2.1" fill="#454a48" fill-opacity="0.68"/>
<circle cx="1765.9" cy="703.0" r="2.1" fill="#454a48" fill-opacity="0.68"/>
<circle cx="1779.3" cy="602.0" r="2.1" fill="#454a48" fill-opacity="0.68"/>
<circle cx="1792.8" cy="661.2" r="2.1" fill="#454a48" fill-opacity="0.68"/>
<circle cx="1806.3" cy="723.9" r="2.1" fill="#454a48" fill-opacity="0.68"/>
<circle cx="1819.8" cy="640.1" r="2.1" fill="#454a48" fill-opacity="0.68"/>
<circle cx="1833.2" cy="603.1" r="2.1" fill="#454a48" fill-opacity="0.68"/>
<circle cx="1846.7" cy="720.8" r="2.1" fill="#454a48" fill-opacity="0.68"/>
<circle cx="1860.2" cy="605.3" r="2.1" fill="#454a48" fill-opacity="0.68"/>
<circle cx="1873.6" cy="626.8" r="2.1" fill="#454a48" fill-opacity="0.68"/>
<rect x="1349" y="578" width="1" height="154" fill="#000" />
<rect x="1349" y="731" width="526" height="1" fill="#000" />
<rect x="1350" y="578" width="4" height="1" fill="#000" />
<text x="1343.5" y="583.2" font-size="12" font-weight="normal" fill="#111" text-anchor="end" >9.76</text>
<rect x="1350" y="594" width="4" height="1" fill="#000" />
<text x="1343.5" y="599.2" font-size="12" font-weight="normal" fill="#111" text-anchor="end" >8.79</text>
<rect x="1350" y="609" width="4" height="1" fill="#000" />
<text x="1343.5" y="614.2" font-size="12" font-weight="normal" fill="#111" text-anchor="end" >7.81</text>
<rect x="1350" y="624" width="4" height="1" fill="#000" />
<text x="1343.5" y="629.2" font-size="12" font-weight="normal" fill="#111" text-anchor="end" >6.84</text>
<rect x="1350" y="640" width="4" height="1" fill="#000" />
<text x="1343.5" y="645.2" font-size="12" font-weight="normal" fill="#111" text-anchor="end" >5.87</text>
<rect x="1350" y="655" width="4" height="1" fill="#000" />
<text x="1343.5" y="660.2" font-size="12" font-weight="normal" fill="#111" text-anchor="end" >4.9</text>
<rect x="1350" y="670" width="4" height="1" fill="#000" />
<text x="1343.5" y="675.2" font-size="12" font-weight="normal" fill="#111" text-anchor="end" >3.93</text>
<rect x="1350" y="686" width="4" height="1" fill="#000" />
<text x="1343.5" y="691.2" font-size="12" font-weight="normal" fill="#111" text-anchor="end" >2.95</text>
<rect x="1350" y="701" width="4" height="1" fill="#000" />
<text x="1343.5" y="706.2" font-size="12" font-weight="normal" fill="#111" text-anchor="end" >1.98</text>
<rect x="1350" y="716" width="4" height="1" fill="#000" />
<text x="1343.5" y="721.2" font-size="12" font-weight="normal" fill="#111" text-anchor="end" >1.01</text>
<rect x="1350" y="731" width="4" height="1" fill="#000" />
<text x="1343.5" y="736.2" font-size="12" font-weight="normal" fill="#111" text-anchor="end" >0.04</text>
<rect x="1362" y="727" width="1" height="4" fill="#000" />
<rect x="1375" y="727" width="1" height="4" fill="#000" />
<rect x="1389" y="727" width="1" height="4" fill="#000" />
<rect x="1402" y="727" width="1" height="4" fill="#000" />
<rect x="1416" y="727" width="1" height="4" fill="#000" />
<rect x="1429" y="727" width="1" height="4" fill="#000" />
<rect x="1443" y="727" width="1" height="4" fill="#000" />
<rect x="1456" y="727" width="1" height="4" fill="#000" />
<rect x="1470" y="727" width="1" height="4" fill="#000" />
<rect x="1483" y="727" width="1" height="4" fill="#000" />
<rect x="1496" y="727" width="1" height="4" fill="#000" />
<rect x="1510" y="727" width="1" height="4" fill="#000" />
<rect x="1523" y="727" width="1" height="4" fill="#000" />
<rect x="1537" y="727" width="1" height="4" fill="#000" />
<rect x="1550" y="727" width="1" height="4" fill="#000" />
<rect x="1564" y="727" width="1" height="4" fill="#000" />
<rect x="1577" y="727" width="1" height="4" fill="#000" />
<rect x="1591" y="727" width="1" height="4" fill="#000" />
<rect x="1604" y="727" width="1" height="4" fill="#000" />
<rect x="1618" y="727" width="1" height="4" fill="#000" />
<rect x="1631" y="727" width="1" height="4" fill="#000" />
<rect x="1645" y="727" width="1" height="4" fill="#000" />
<rect x="1658" y="727" width="1" height="4" fill="#000" />
<rect x="1672" y="727" width="1" height="4" fill="#000" />
<rect x="1685" y="727" width="1" height="4" fill="#000" />
<rect x="1699" y="727" width="1" height="4" fill="#000" />
<rect x="1712" y="727" width="1" height="4" fill="#000" />
<rect x="1725" y="727" width="1" height="4" fill="#000" />
<rect x="1739" y="727" width="1" height="4" fill="#000" />
<rect x="1752" y="727" width="1" height="4" fill="#000" />
<rect x="1766" y="727" width="1" height="4" fill="#000" />
<rect x="1779" y="727" width="1" height="4" fill="#000" />
<rect x="1793" y="727" width="1" height="4" fill="#000" />
<rect x="1806" y="727" width="1" height="4" fill="#000" />
<rect x="1820" y="727" width="1" height="4" fill="#000" />
<rect x="1833" y="727" width="1" height="4" fill="#000" />
<rect x="1847" y="727" width="1" height="4" fill="#000" />
<rect x="1860" y="727" width="1" height="4" fill="#000" />
<rect x="1874" y="727" width="1" height="4" fill="#000" />
<text x="1349.3" y="750" font-size="12" font-weight="normal" fill="#111" text-anchor="middle" >0</text>
<text x="1389.71" y="750" font-size="12" font-weight="normal" fill="#111" text-anchor="middle" >3</text>
<text x="1430.12" y="750" font-size="12" font-weight="normal" fill="#111" text-anchor="middle" >6</text>
<text x="1470.53" y="750" font-size="12" font-weight="normal" fill="#111" text-anchor="middle" >9</text>
<text x="1510.94" y="750" font-size="12" font-weight="normal" fill="#111" text-anchor="middle" >12</text>
<text x="1551.35" y="750" font-size="12" font-weight="normal" fill="#111" text-anchor="middle" >15</text>
<text x="1591.76" y="750" font-size="12" font-weight="normal" fill="#111" text-anchor="middle" >18</text>
<text x="1632.17" y="750" font-size="12" font-weight="normal" fill="#111" text-anchor="middle" >21</text>
<text x="1672.58" y="750" font-size="12" font-weight="normal" fill="#111" text-anchor="middle" >24</text>
<text x="1712.99" y="750" font-size="12" font-weight="normal" fill="#111" text-anchor="middle" >27</text>
<text x="1753.4" y="750" font-size="12" font-weight="normal" fill="#111" text-anchor="middle" >30</text>
<text x="1793.81" y="750" font-size="12" font-weight="normal" fill="#111" text-anchor="middle" >33</text>
<text x="1834.22" y="750" font-size="12" font-weight="normal" fill="#111" text-anchor="middle" >36</text>
<text x="1874.63" y="750" font-size="12" font-weight="normal" fill="#111" text-anchor="middle" >39</text>
<rect x="1350" y="822" width="525" height="153" fill="#fff" />
<rect x="1350" y="822" width="525" height="1" fill="rgba(0,0,0,0.16)" />
<rect x="1350" y="838" width="525" height="1" fill="rgba(0,0,0,0.16)" />
<rect x="1350" y="853" width="525" height="1" fill="rgba(0,0,0,0.16)" />
<rect x="1350" y="868" width="525" height="1" fill="rgba(0,0,0,0.16)" />
<rect x="1350" y="884" width="525" height="1" fill="rgba(0,0,0,0.16)" />
<rect x="1350" y="899" width="525" height="1" fill="rgba(0,0,0,0.16)" />
<rect x="1350" y="914" width="525" height="1" fill="rgba(0,0,0,0.16)" />
<rect x="1350" y="930" width="525" height="1" fill="rgba(0,0,0,0.16)" />
<rect x="1350" y="945" width="525" height="1" fill="rgba(0,0,0,0.16)" />
<rect x="1350" y="960" width="525" height="1" fill="rgba(0,0,0,0.16)" />
<rect x="1350" y="975" width="525" height="1" fill="rgba(0,0,0,0.16)" />
<rect x="1389" y="822" width="1" height="153" fill="rgba(0,0,0,0.16)" />
<rect x="1429" y="822" width="1" height="153" fill="rgba(0,0,0,0.16)" />
<rect x="1470" y="822" width="1" height="153" fill="rgba(0,0,0,0.16)" />
<rect x="1510" y="822" width="1" height="153" fill="rgba(0,0,0,0.16)" />
<rect x="1550" y="822" width="1" height="153" fill="rgba(0,0,0,0.16)" />
<rect x="1591" y="822" width="1" height="153" fill="rgba(0,0,0,0.16)" />
<rect x="1631" y="822" width="1" height="153" fill="rgba(0,0,0,0.16)" />
<rect x="1672" y="822" width="1" height="153" fill="rgba(0,0,0,0.16)" />
<rect x="1712" y="822" width="1" height="153" fill="rgba(0,0,0,0.16)" />
<rect x="1752" y="822" width="1" height="153" fill="rgba(0,0,0,0.16)" />
<rect x="1793" y="822" width="1" height="153" fill="rgba(0,0,0,0.16)" />
<rect x="1833" y="822" width="1" height="153" fill="rgba(0,0,0,0.16)" />
<rect x="1874" y="822" width="1" height="153" fill="rgba(0,0,0,0.16)" />
<rect x="1874" y="822" width="1" height="153" fill="rgba(0,0,0,0.16)" />
<polyline points="1348.3,867.9 1361.8,949.7 1375.2,836.8 1388.7,954.1 1402.2,874.2 1415.6,886.8 1429.1,946.8 1442.6,937.9 1456.1,899.0 1469.5,832.0 1483.0,834.8 1496.5,921.9 1509.9,927.9 1523.4,859.1 1536.9,869.7 1550.3,854.8 1563.8,849.1 1577.3,936.8 1590.8,968.5 1604.2,885.9 1617.7,857.9 1631.2,879.0 1644.6,925.7 1658.1,904.1 1671.6,899.0 1685.0,823.7 1698.5,846.8 1712.0,963.4 1725.5,853.7 1738.9,833.1 1752.4,933.0 1765.9,825.7 1779.3,970.8 1792.8,930.8 1806.3,911.2 1819.8,849.1 1833.2,890.8 1846.7,884.8 1860.2,838.0 1873.6,911.2" fill="none" stroke="#46dcc6" stroke-width="2.0" stroke-linejoin="round" stroke-linecap="round"/>
<polyline points="1348.3,923.0 1361.8,912.6 1375.2,951.9 1388.7,930.8 1402.2,930.8 1415.6,933.0 1429.1,917.9 1442.6,899.0 1456.1,870.8 1469.5,870.2 1483.0,830.2 1496.5,975.2 1509.9,825.7 1523.4,969.0 1536.9,960.3 1550.3,860.8 1563.8,906.4 1577.3,947.9 1590.8,900.8 1604.2,919.7 1617.7,881.5 1631.2,861.3 1644.6,870.2 1658.1,822.6 1671.6,872.4 1685.0,893.0 1698.5,917.9 1712.0,925.9 1725.5,865.9 1738.9,939.0 1752.4,858.2 1765.9,947.9 1779.3,965.2 1792.8,843.1 1806.3,946.8 1819.8,822.0 1833.2,838.6 1846.7,953.0 1860.2,911.2 1873.6,963.4" fill="none" stroke="#178a1e" stroke-width="2.3" stroke-linejoin="round" stroke-linecap="round"/>
<circle cx="1348.3" cy="867.9" r="2.1" fill="#454a48" fill-opacity="0.68"/>
<circle cx="1361.8" cy="949.7" r="2.1" fill="#454a48" fill-opacity="0.68"/>
<circle cx="1375.2" cy="836.8" r="2.1" fill="#454a48" fill-opacity="0.68"/>
<circle cx="1388.7" cy="954.1" r="2.1" fill="#454a48" fill-opacity="0.68"/>
<circle cx="1402.2" cy="874.2" r="2.1" fill="#454a48" fill-opacity="0.68"/>
<circle cx="1415.6" cy="886.8" r="2.1" fill="#454a48" fill-opacity="0.68"/>
<circle cx="1429.1" cy="946.8" r="2.1" fill="#454a48" fill-opacity="0.68"/>
<circle cx="1442.6" cy="937.9" r="2.1" fill="#454a48" fill-opacity="0.68"/>
<circle cx="1456.1" cy="899.0" r="2.1" fill="#454a48" fill-opacity="0.68"/>
<circle cx="1469.5" cy="832.0" r="2.1" fill="#454a48" fill-opacity="0.68"/>
<circle cx="1483.0" cy="834.8" r="2.1" fill="#454a48" fill-opacity="0.68"/>
<circle cx="1496.5" cy="921.9" r="2.1" fill="#454a48" fill-opacity="0.68"/>
<circle cx="1509.9" cy="927.9" r="2.1" fill="#454a48" fill-opacity="0.68"/>
<circle cx="1523.4" cy="859.1" r="2.1" fill="#454a48" fill-opacity="0.68"/>
<circle cx="1536.9" cy="869.7" r="2.1" fill="#454a48" fill-opacity="0.68"/>
<circle cx="1550.3" cy="854.8" r="2.1" fill="#454a48" fill-opacity="0.68"/>
<circle cx="1563.8" cy="849.1" r="2.1" fill="#454a48" fill-opacity="0.68"/>
<circle cx="1577.3" cy="936.8" r="2.1" fill="#454a48" fill-opacity="0.68"/>
<circle cx="1590.8" cy="968.5" r="2.1" fill="#454a48" fill-opacity="0.68"/>
<circle cx="1604.2" cy="885.9" r="2.1" fill="#454a48" fill-opacity="0.68"/>
<circle cx="1617.7" cy="857.9" r="2.1" fill="#454a48" fill-opacity="0.68"/>
<circle cx="1631.2" cy="879.0" r="2.1" fill="#454a48" fill-opacity="0.68"/>
<circle cx="1644.6" cy="925.7" r="2.1" fill="#454a48" fill-opacity="0.68"/>
<circle cx="1658.1" cy="904.1" r="2.1" fill="#454a48" fill-opacity="0.68"/>
<circle cx="1671.6" cy="899.0" r="2.1" fill="#454a48" fill-opacity="0.68"/>
<circle cx="1685.0" cy="823.7" r="2.1" fill="#454a48" fill-opacity="0.68"/>
<circle cx="1698.5" cy="846.8" r="2.1" fill="#454a48" fill-opacity="0.68"/>
<circle cx="1712.0" cy="963.4" r="2.1" fill="#454a48" fill-opacity="0.68"/>
<circle cx="1725.5" cy="853.7" r="2.1" fill="#454a48" fill-opacity="0.68"/>
<circle cx="1738.9" cy="833.1" r="2.1" fill="#454a48" fill-opacity="0.68"/>
<circle cx="1752.4" cy="933.0" r="2.1" fill="#454a48" fill-opacity="0.68"/>
<circle cx="1765.9" cy="825.7" r="2.1" fill="#454a48" fill-opacity="0.68"/>
<circle cx="1779.3" cy="970.8" r="2.1" fill="#454a48" fill-opacity="0.68"/>
<circle cx="1792.8" cy="930.8" r="2.1" fill="#454a48" fill-opacity="0.68"/>
<circle cx="1806.3" cy="911.2" r="2.1" fill="#454a48" fill-opacity="0.68"/>
<circle cx="1819.8" cy="849.1" r="2.1" fill="#454a48" fill-opacity="0.68"/>
<circle cx="1833.2" cy="890.8" r="2.1" fill="#454a48" fill-opacity="0.68"/>
<circle cx="1846.7" cy="884.8" r="2.1" fill="#454a48" fill-opacity="0.68"/>
<circle cx="1860.2" cy="838.0" r="2.1" fill="#454a48" fill-opacity="0.68"/>
<circle cx="1873.6" cy="911.2" r="2.1" fill="#454a48" fill-opacity="0.68"/>
<circle cx="1348.3" cy="923.0" r="2.1" fill="#454a48" fill-opacity="0.68"/>
<circle cx="1361.8" cy="912.6" r="2.1" fill="#454a48" fill-opacity="0.68"/>
<circle cx="1375.2" cy="951.9" r="2.1" fill="#454a48" fill-opacity="0.68"/>
<circle cx="1388.7" cy="930.8" r="2.1" fill="#454a48" fill-opacity="0.68"/>
<circle cx="1402.2" cy="930.8" r="2.1" fill="#454a48" fill-opacity="0.68"/>
<circle cx="1415.6" cy="933.0" r="2.1" fill="#454a48" fill-opacity="0.68"/>
<circle cx="1429.1" cy="917.9" r="2.1" fill="#454a48" fill-opacity="0.68"/>
<circle cx="1442.6" cy="899.0" r="2.1" fill="#454a48" fill-opacity="0.68"/>
<circle cx="1456.1" cy="870.8" r="2.1" fill="#454a48" fill-opacity="0.68"/>
<circle cx="1469.5" cy="870.2" r="2.1" fill="#454a48" fill-opacity="0.68"/>
<circle cx="1483.0" cy="830.2" r="2.1" fill="#454a48" fill-opacity="0.68"/>
<circle cx="1496.5" cy="975.2" r="2.1" fill="#454a48" fill-opacity="0.68"/>
<circle cx="1509.9" cy="825.7" r="2.1" fill="#454a48" fill-opacity="0.68"/>
<circle cx="1523.4" cy="969.0" r="2.1" fill="#454a48" fill-opacity="0.68"/>
<circle cx="1536.9" cy="960.3" r="2.1" fill="#454a48" fill-opacity="0.68"/>
<circle cx="1550.3" cy="860.8" r="2.1" fill="#454a48" fill-opacity="0.68"/>
<circle cx="1563.8" cy="906.4" r="2.1" fill="#454a48" fill-opacity="0.68"/>
<circle cx="1577.3" cy="947.9" r="2.1" fill="#454a48" fill-opacity="0.68"/>
<circle cx="1590.8" cy="900.8" r="2.1" fill="#454a48" fill-opacity="0.68"/>
<circle cx="1604.2" cy="919.7" r="2.1" fill="#454a48" fill-opacity="0.68"/>
<circle cx="1617.7" cy="881.5" r="2.1" fill="#454a48" fill-opacity="0.68"/>
<circle cx="1631.2" cy="861.3" r="2.1" fill="#454a48" fill-opacity="0.68"/>
<circle cx="1644.6" cy="870.2" r="2.1" fill="#454a48" fill-opacity="0.68"/>
<circle cx="1658.1" cy="822.6" r="2.1" fill="#454a48" fill-opacity="0.68"/>
<circle cx="1671.6" cy="872.4" r="2.1" fill="#454a48" fill-opacity="0.68"/>
<circle cx="1685.0" cy="893.0" r="2.1" fill="#454a48" fill-opacity="0.68"/>
<circle cx="1698.5" cy="917.9" r="2.1" fill="#454a48" fill-opacity="0.68"/>
<circle cx="1712.0" cy="925.9" r="2.1" fill="#454a48" fill-opacity="0.68"/>
<circle cx="1725.5" cy="865.9" r="2.1" fill="#454a48" fill-opacity="0.68"/>
<circle cx="1738.9" cy="939.0" r="2.1" fill="#454a48" fill-opacity="0.68"/>
<circle cx="1752.4" cy="858.2" r="2.1" fill="#454a48" fill-opacity="0.68"/>
<circle cx="1765.9" cy="947.9" r="2.1" fill="#454a48" fill-opacity="0.68"/>
<circle cx="1779.3" cy="965.2" r="2.1" fill="#454a48" fill-opacity="0.68"/>
<circle cx="1792.8" cy="843.1" r="2.1" fill="#454a48" fill-opacity="0.68"/>
<circle cx="1806.3" cy="946.8" r="2.1" fill="#454a48" fill-opacity="0.68"/>
<circle cx="1819.8" cy="822.0" r="2.1" fill="#454a48" fill-opacity="0.68"/>
<circle cx="1833.2" cy="838.6" r="2.1" fill="#454a48" fill-opacity="0.68"/>
<circle cx="1846.7" cy="953.0" r="2.1" fill="#454a48" fill-opacity="0.68"/>
<circle cx="1860.2" cy="911.2" r="2.1" fill="#454a48" fill-opacity="0.68"/>
<circle cx="1873.6" cy="963.4" r="2.1" fill="#454a48" fill-opacity="0.68"/>
<rect x="1349" y="822" width="1" height="154" fill="#000" />
<rect x="1349" y="975" width="526" height="1" fill="#000" />
<rect x="1350" y="822" width="4" height="1" fill="#000" />
<text x="1343.5" y="827.2" font-size="12" font-weight="normal" fill="#111" text-anchor="end" >9.92</text>
<rect x="1350" y="838" width="4" height="1" fill="#000" />
<text x="1343.5" y="843.2" font-size="12" font-weight="normal" fill="#111" text-anchor="end" >8.94</text>
<rect x="1350" y="853" width="4" height="1" fill="#000" />
<text x="1343.5" y="858.2" font-size="12" font-weight="normal" fill="#111" text-anchor="end" >7.96</text>
<rect x="1350" y="868" width="4" height="1" fill="#000" />
<text x="1343.5" y="873.2" font-size="12" font-weight="normal" fill="#111" text-anchor="end" >6.99</text>
<rect x="1350" y="884" width="4" height="1" fill="#000" />
<text x="1343.5" y="889.2" font-size="12" font-weight="normal" fill="#111" text-anchor="end" >6.01</text>
<rect x="1350" y="899" width="4" height="1" fill="#000" />
<text x="1343.5" y="904.2" font-size="12" font-weight="normal" fill="#111" text-anchor="end" >5.03</text>
<rect x="1350" y="914" width="4" height="1" fill="#000" />
<text x="1343.5" y="919.2" font-size="12" font-weight="normal" fill="#111" text-anchor="end" >4.05</text>
<rect x="1350" y="930" width="4" height="1" fill="#000" />
<text x="1343.5" y="935.2" font-size="12" font-weight="normal" fill="#111" text-anchor="end" >3.07</text>
<rect x="1350" y="945" width="4" height="1" fill="#000" />
<text x="1343.5" y="950.2" font-size="12" font-weight="normal" fill="#111" text-anchor="end" >2.09</text>
<rect x="1350" y="960" width="4" height="1" fill="#000" />
<text x="1343.5" y="965.2" font-size="12" font-weight="normal" fill="#111" text-anchor="end" >1.11</text>
<rect x="1350" y="975" width="4" height="1" fill="#000" />
<text x="1343.5" y="980.2" font-size="12" font-weight="normal" fill="#111" text-anchor="end" >0.13</text>
<rect x="1362" y="971" width="1" height="4" fill="#000" />
<rect x="1375" y="971" width="1" height="4" fill="#000" />
<rect x="1389" y="971" width="1" height="4" fill="#000" />
<rect x="1402" y="971" width="1" height="4" fill="#000" />
<rect x="1416" y="971" width="1" height="4" fill="#000" />
<rect x="1429" y="971" width="1" height="4" fill="#000" />
<rect x="1443" y="971" width="1" height="4" fill="#000" />
<rect x="1456" y="971" width="1" height="4" fill="#000" />
<rect x="1470" y="971" width="1" height="4" fill="#000" />
<rect x="1483" y="971" width="1" height="4" fill="#000" />
<rect x="1496" y="971" width="1" height="4" fill="#000" />
<rect x="1510" y="971" width="1" height="4" fill="#000" />
<rect x="1523" y="971" width="1" height="4" fill="#000" />
<rect x="1537" y="971" width="1" height="4" fill="#000" />
<rect x="1550" y="971" width="1" height="4" fill="#000" />
<rect x="1564" y="971" width="1" height="4" fill="#000" />
<rect x="1577" y="971" width="1" height="4" fill="#000" />
<rect x="1591" y="971" width="1" height="4" fill="#000" />
<rect x="1604" y="971" width="1" height="4" fill="#000" />
<rect x="1618" y="971" width="1" height="4" fill="#000" />
<rect x="1631" y="971" width="1" height="4" fill="#000" />
<rect x="1645" y="971" width="1" height="4" fill="#000" />
<rect x="1658" y="971" width="1" height="4" fill="#000" />
<rect x="1672" y="971" width="1" height="4" fill="#000" />
<rect x="1685" y="971" width="1" height="4" fill="#000" />
<rect x="1699" y="971" width="1" height="4" fill="#000" />
<rect x="1712" y="971" width="1" height="4" fill="#000" />
<rect x="1725" y="971" width="1" height="4" fill="#000" />
<rect x="1739" y="971" width="1" height="4" fill="#000" />
<rect x="1752" y="971" width="1" height="4" fill="#000" />
<rect x="1766" y="971" width="1" height="4" fill="#000" />
<rect x="1779" y="971" width="1" height="4" fill="#000" />
<rect x="1793" y="971" width="1" height="4" fill="#000" />
<rect x="1806" y="971" width="1" height="4" fill="#000" />
<rect x="1820" y="971" width="1" height="4" fill="#000" />
<rect x="1833" y="971" width="1" height="4" fill="#000" />
<rect x="1847" y="971" width="1" height="4" fill="#000" />
<rect x="1860" y="971" width="1" height="4" fill="#000" />
<rect x="1874" y="971" width="1" height="4" fill="#000" />
<text x="1349.3" y="994" font-size="12" font-weight="normal" fill="#111" text-anchor="middle" >0</text>
<text x="1389.71" y="994" font-size="12" font-weight="normal" fill="#111" text-anchor="middle" >3</text>
<text x="1430.12" y="994" font-size="12" font-weight="normal" fill="#111" text-anchor="middle" >6</text>
<text x="1470.53" y="994" font-size="12" font-weight="normal" fill="#111" text-anchor="middle" >9</text>
<text x="1510.94" y="994" font-size="12" font-weight="normal" fill="#111" text-anchor="middle" >12</text>
<text x="1551.35" y="994" font-size="12" font-weight="normal" fill="#111" text-anchor="middle" >15</text>
<text x="1591.76" y="994" font-size="12" font-weight="normal" fill="#111" text-anchor="middle" >18</text>
<text x="1632.17" y="994" font-size="12" font-weight="normal" fill="#111" text-anchor="middle" >21</text>
<text x="1672.58" y="994" font-size="12" font-weight="normal" fill="#111" text-anchor="middle" >24</text>
<text x="1712.99" y="994" font-size="12" font-weight="normal" fill="#111" text-anchor="middle" >27</text>
<text x="1753.4" y="994" font-size="12" font-weight="normal" fill="#111" text-anchor="middle" >30</text>
<text x="1793.81" y="994" font-size="12" font-weight="normal" fill="#111" text-anchor="middle" >33</text>
<text x="1834.22" y="994" font-size="12" font-weight="normal" fill="#111" text-anchor="middle" >36</text>
<text x="1874.63" y="994" font-size="12" font-weight="normal" fill="#111" text-anchor="middle" >39</text>
<text x="1443.2" y="62.2" font-size="12" font-weight="bold" fill="#188a28" text-anchor="start" textLength="143.3" lengthAdjust="spacingAndGlyphs" >Earnings Per Share (EPS)</text>
<text x="1596.7" y="62.2" font-size="12" font-weight="bold" fill="#4cd6c4" text-anchor="start" textLength="157.6" lengthAdjust="spacingAndGlyphs" >Price to Earnings Ratio (P/E)</text>
<text x="1429.5" y="306.2" font-size="12" font-weight="bold" fill="#e03a4c" text-anchor="start" textLength="141" lengthAdjust="spacingAndGlyphs" >Price to Sales Ratio (P/S)</text>
<text x="1581.1" y="306.2" font-size="12" font-weight="bold" fill="#ec9448" text-anchor="start" textLength="185" lengthAdjust="spacingAndGlyphs" >Projected Earnings Growth (PEG)</text>
<text x="1458.8" y="550.2" font-size="12" font-weight="bold" fill="#4646c8" text-anchor="start" textLength="128" lengthAdjust="spacingAndGlyphs" >Return On Equity (ROE)</text>
<text x="1597.8" y="550.2" font-size="12" font-weight="bold" fill="#4cd6c4" text-anchor="start" textLength="137.7" lengthAdjust="spacingAndGlyphs" >Price to Book Ratio (P/B)</text>
<text x="1335.5" y="794.2" font-size="12" font-weight="bold" fill="#4cd6c4" text-anchor="start" textLength="276.7" lengthAdjust="spacingAndGlyphs" >Dividend Payout Ratio (DividendValue/NetIncome)</text>
<text x="1623.3" y="794.2" font-size="12" font-weight="bold" fill="#188a28" text-anchor="start" textLength="237.7" lengthAdjust="spacingAndGlyphs" >Dividend Yield (YearlyDividend/StockPrice)</text>
</svg></body></html>
